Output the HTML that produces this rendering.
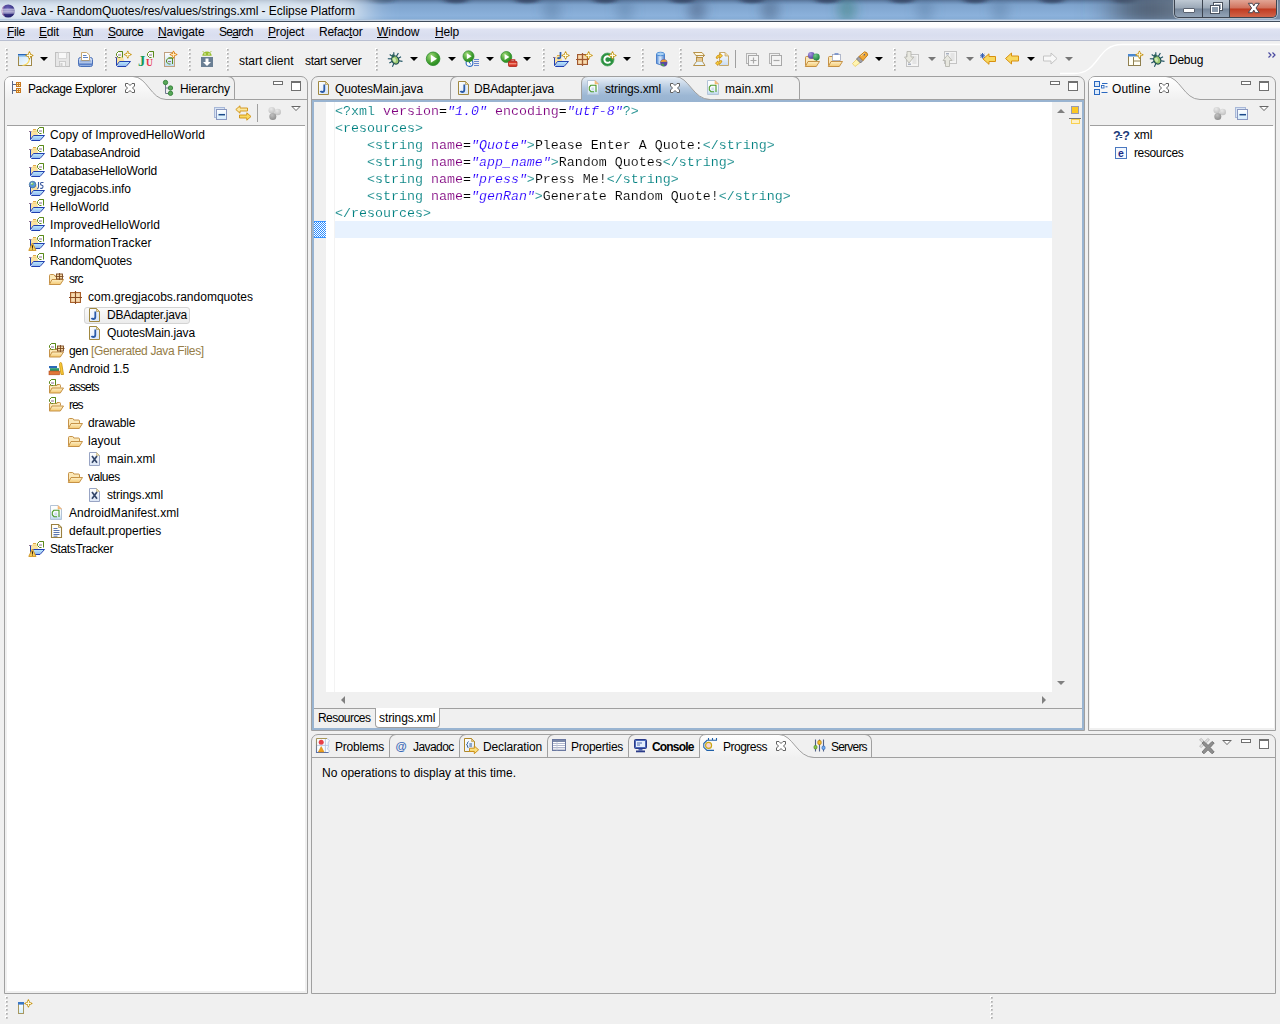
<!DOCTYPE html>
<html><head><meta charset="utf-8"><title>Java - RandomQuotes/res/values/strings.xml - Eclipse Platform</title>
<style>
*{margin:0;padding:0}
html,body{width:1280px;height:1024px;overflow:hidden;background:#f0f0f0;font-family:"Liberation Sans",sans-serif;font-size:12px;color:#000}
body{position:relative}
.t{position:absolute;white-space:pre;line-height:16px;height:16px;font-size:12px}
.ic{position:absolute;overflow:visible}
#title{position:absolute;left:0;top:0;width:1280px;height:22px;overflow:hidden;background:#86a8d0}
#winbtns{position:absolute;left:1174px;top:0;width:103px;height:18px;border:1px solid #3c4450;border-top:none;border-radius:0 0 5px 5px;box-sizing:border-box;overflow:hidden;display:flex;box-shadow:0 0 0 1px rgba(255,255,255,.45)}
.wb{position:relative;height:17px;box-sizing:border-box}
.wb.min{width:28px;background:linear-gradient(#bfc9d4 0,#9aa7b6 48%,#76869a 52%,#93a4b7 100%);border-right:1px solid #3c4450}
.wb.min i{position:absolute;left:8px;top:8px;width:10px;height:3px;background:#fff;border:1px solid #5a6270;box-sizing:content-box;border-radius:1px}
.wb.max{width:27px;background:linear-gradient(#bfc9d4 0,#9aa7b6 48%,#76869a 52%,#93a4b7 100%);border-right:1px solid #3c4450}
.wb.max i{position:absolute;left:11px;top:3px;width:6px;height:5px;border:1.5px solid #fff;outline:1px solid #4a525e}
.wb.max b{position:absolute;left:8px;top:6px;width:6px;height:5px;border:1.5px solid #fff;outline:1px solid #4a525e;background:#8b9aab}
.wb.cls{width:46px;background:linear-gradient(#e2a595 0,#d0715c 48%,#c03a20 52%,#d0644a 100%)}
.wb.cls svg{position:absolute;left:17px;top:2px}
#menu{position:absolute;left:0;top:22px;width:1280px;height:19px;
 background:linear-gradient(#ffffff 0,#fcfcfe 5px,#f2f4fb 6px,#dfe3f3 7px,#d9deef 13px,#dce0f0 17px,#e0e4f2 18px,#b9bfd1 18px,#b9bfd1 19px)}
#menu u{text-decoration:underline;text-underline-offset:1px}
#toolbar{position:absolute;left:0;top:0;width:0;height:0}
.hdl{position:absolute;width:3px;background-image:linear-gradient(#fff,#fff),linear-gradient(#a0a0a0,#a0a0a0);
 background-size:2px 2px,2px 2px;background-position:1px 1px,0 0;background-repeat:repeat-y;
 background-size:2px 4px,2px 4px;
}
.hdl{background:
 repeating-linear-gradient(to bottom,#a8a8a8 0,#a8a8a8 2px,transparent 2px,transparent 4px) 0 0/2px 100% no-repeat,
 repeating-linear-gradient(to bottom,transparent 0,transparent 1px,#fff 1px,#fff 3px,transparent 3px,transparent 4px) 1px 0/2px 100% no-repeat}
.dd{position:absolute;width:0;height:0;border-left:4px solid transparent;border-right:4px solid transparent;border-top:4px solid #000}
.vsep{position:absolute;width:1px;background:#a0a0a0}
.panel{position:absolute;box-sizing:border-box;border:1px solid #a0a0a0;border-radius:7px 7px 0 0;background:#f0f0f0;
 background-image:linear-gradient(#f0f0f0 0,#f0f0f0 22px,#a0a0a0 22px,#a0a0a0 23px,#f0f0f0 23px);background-repeat:no-repeat}
.panel{border-bottom-color:#a0a0a0}
.tabcurve{position:absolute}
.tabend{position:absolute;width:7px;height:23px;border:1px solid #a0a0a0;border-left:none;border-bottom:none;border-radius:0 7px 0 0;box-sizing:border-box;margin-left:-6px}
.mini{position:absolute;width:10px;height:4px;border:1px solid #707070;box-sizing:border-box;background:#fff}
.maxi{position:absolute;width:10px;height:10px;border:1px solid #707070;border-top-width:2px;box-sizing:border-box;background:#fff}
.vmenu{position:absolute;width:0;height:0;border-left:5px solid transparent;border-right:5px solid transparent;border-top:5px solid #666}
.vmenu:after{content:"";position:absolute;left:-3px;top:-4px;border-left:3px solid transparent;border-right:3px solid transparent;border-top:3px solid #fff}
.white{position:absolute;background:#fff}
.hline{position:absolute;height:1px;background:#a0a0a0}
.selbox{position:absolute;border:1px solid #d4d4d4;border-radius:3px;box-sizing:border-box;background:linear-gradient(#fafafa,#ececec)}
.bluebox{position:absolute;box-sizing:border-box;border:2px solid #99b4d1;background:#f0f0f0}
#code{position:absolute;left:335px;top:104px;-webkit-text-stroke:0.12px #fff;font-family:"Liberation Mono",monospace;font-size:12.2px;line-height:17px;color:#000;white-space:pre;transform:scaleX(1.09272);transform-origin:0 0}
#code .tg{color:#008080}
#code .at{color:#7f007f}
#code .va{color:#2a00ff;font-style:italic}
.arr{position:absolute;width:0;height:0;border:4px solid transparent}
.arr.up{border-bottom:4px solid #808080;border-top:none}
.arr.down{border-top:4px solid #808080;border-bottom:none}
.arr.left{border-right:4px solid #808080;border-left:none}
.arr.right{border-left:4px solid #808080;border-right:none}
.tabsep{position:absolute;width:8px;height:23px;border:1px solid #a0a0a0;border-right:none;border-bottom:none;border-radius:7px 0 0 0;box-sizing:border-box}
.tabend{position:absolute;width:7px;height:23px;border:1px solid #a0a0a0;border-left:none;border-bottom:none;border-radius:0 7px 0 0;box-sizing:border-box;margin-left:0}

</style></head><body>
<svg width="0" height="0" style="position:absolute"><defs>
<linearGradient id="gInact" x1="0" y1="0" x2="0" y2="1"><stop offset="0" stop-color="#ffffff"/><stop offset="1" stop-color="#f0f0f0"/></linearGradient>
</defs></svg>
<div id="title"><svg style="position:absolute;left:0;top:0" width="1280" height="22" viewBox="0 0 1280 22"><defs><linearGradient id="tbg" x1="0" y1="0" x2="0" y2="1"><stop offset="0" stop-color="#587498"/><stop offset=".1" stop-color="#6b8db6"/><stop offset=".22" stop-color="#7ea3cd"/><stop offset=".7" stop-color="#8bb1db"/><stop offset="1" stop-color="#80a7d1"/></linearGradient><filter id="b4" x="-50%" y="-200%" width="200%" height="500%"><feGaussianBlur stdDeviation="3.500 1.300"/></filter><filter id="b6" x="-50%" y="-200%" width="200%" height="500%"><feGaussianBlur stdDeviation="6 4"/></filter><filter id="b14" x="-20%" y="-300%" width="140%" height="700%"><feGaussianBlur stdDeviation="16 5"/></filter><filter id="b20" x="-50%" y="-300%" width="200%" height="700%"><feGaussianBlur stdDeviation="16 6"/></filter></defs><rect width="1280" height="22" fill="url(#tbg)"/><g filter="url(#b6)"><ellipse cx="697" cy="10" rx="9" ry="12" fill="#3f5878" opacity="0.5"/><ellipse cx="770" cy="10" rx="9" ry="12" fill="#3f5878" opacity="0.45"/><ellipse cx="847" cy="10" rx="9" ry="12" fill="#2f7a6a" opacity="0.45"/><ellipse cx="552" cy="10" rx="9" ry="12" fill="#4a6a90" opacity="0.35"/><ellipse cx="625" cy="10" rx="9" ry="12" fill="#4a6a90" opacity="0.3"/><ellipse cx="925" cy="10" rx="9" ry="12" fill="#4a6a90" opacity="0.3"/><ellipse cx="1000" cy="10" rx="9" ry="12" fill="#4a6a90" opacity="0.3"/></g><g filter="url(#b4)"><ellipse cx="232" cy="0" rx="12" ry="3.600" fill="#22324e" opacity="0.35"/><ellipse cx="307" cy="0" rx="12" ry="3.600" fill="#22324e" opacity="0.35"/><ellipse cx="382" cy="0" rx="12" ry="3.600" fill="#22324e" opacity="0.35"/><ellipse cx="456" cy="0" rx="12" ry="3.600" fill="#22324e" opacity="0.62"/><ellipse cx="527" cy="0" rx="12" ry="3.600" fill="#22324e" opacity="0.62"/><ellipse cx="605" cy="0" rx="12" ry="3.600" fill="#22324e" opacity="0.62"/><ellipse cx="682" cy="0" rx="12" ry="3.600" fill="#22324e" opacity="0.62"/><ellipse cx="752" cy="0" rx="12" ry="3.600" fill="#22324e" opacity="0.62"/><ellipse cx="827" cy="0" rx="12" ry="3.600" fill="#22324e" opacity="0.62"/><ellipse cx="902" cy="0" rx="12" ry="3.600" fill="#22324e" opacity="0.62"/><ellipse cx="975" cy="0" rx="12" ry="3.600" fill="#22324e" opacity="0.62"/><ellipse cx="1052" cy="0" rx="12" ry="3.600" fill="#22324e" opacity="0.62"/><ellipse cx="1125" cy="0" rx="12" ry="3.600" fill="#22324e" opacity="0.62"/></g><g filter="url(#b20)"><rect x="1135" y="-6" width="160" height="30" fill="#6c7c90" opacity=".95"/><rect x="1277" y="0" width="3" height="20" fill="#a4b2c2"/><rect x="1112" y="-4" width="58" height="26" fill="#4a5a6e" opacity=".75"/></g><g filter="url(#b14)"><rect x="-40" y="-8" width="405" height="38" fill="#f4f6f8" opacity=".6"/><rect x="-40" y="4" width="400" height="13" fill="#fff" opacity=".52"/></g><rect x="0" y="19" width="1280" height="1" fill="#a9c0da" opacity=".7"/><rect x="0" y="20" width="1280" height="1" fill="#c9d6e6"/><rect x="0" y="21" width="1280" height="1" fill="#3f4b5b"/></svg>
<svg class="ic" style="left:0px;top:3px" width="16" height="16" viewBox="0 0 16 16"><defs><radialGradient id="ecl" cx="0.45" cy="0.3" r="0.75"><stop offset="0" stop-color="#6a62b8"/><stop offset="1" stop-color="#1c1a66"/></radialGradient></defs>
<circle cx="8.200" cy="8" r="6.600" fill="url(#ecl)"/><path d="M1.600 8 a6.600 6.600 0 0 1 3.500 -5.800 a8.500 8.500 0 0 0 0 11.600 A6.600 6.600 0 0 1 1.600 8Z" fill="#e89ac0" opacity=".6"/><rect x="1.800" y="5.700" width="12.900" height="1" fill="#e8e6f8" opacity=".9"/><rect x="1.500" y="7.500" width="13.300" height="1.100" fill="#ffffff" opacity=".95"/><rect x="1.800" y="9.400" width="12.900" height="1" fill="#e8e6f8" opacity=".9"/></svg>
<span class="t" style="left:21px;top:3px;letter-spacing:-0.035px;">Java - RandomQuotes/res/values/strings.xml - Eclipse Platform</span>
<div id="winbtns"><div class="wb min"><i></i></div><div class="wb max"><i></i><b></b></div><div class="wb cls"><svg width="14" height="12" viewBox="0 0 14 12"><path transform="translate(1.300 1.300)" d="M0 0 H4 L5.500 2.600 L7 0 H11 L7.700 4.700 L11 9.400 H7 L5.500 6.800 L4 9.400 H0 L3.300 4.700 Z" fill="#ffffff" stroke="#4a4650" stroke-width="1" stroke-linejoin="round"/></svg></div></div>
</div>
<div id="menu">
<span class="t" style="left:7px;top:2px;letter-spacing:-0.388px;"><u>F</u>ile</span>
<span class="t" style="left:39px;top:2px;letter-spacing:-0.201px;"><u>E</u>dit</span>
<span class="t" style="left:73px;top:2px;letter-spacing:-0.812px;"><u>R</u>un</span>
<span class="t" style="left:108px;top:2px;letter-spacing:-0.463px;"><u>S</u>ource</span>
<span class="t" style="left:158px;top:2px;letter-spacing:-0.083px;"><u>N</u>avigate</span>
<span class="t" style="left:219px;top:2px;letter-spacing:-0.736px;">Se<u>a</u>rch</span>
<span class="t" style="left:268px;top:2px;letter-spacing:-0.171px;"><u>P</u>roject</span>
<span class="t" style="left:319px;top:2px;letter-spacing:-0.250px;">Refac<u>t</u>or</span>
<span class="t" style="left:377px;top:2px;letter-spacing:-0.034px;"><u>W</u>indow</span>
<span class="t" style="left:435px;top:2px;letter-spacing:-0.196px;"><u>H</u>elp</span>
</div>
<div id="toolbar">
<svg style="position:absolute;left:5px;top:48px" width="3" height="24" viewBox="0 0 3 24"><rect x="0" y="0" width="2" height="2" fill="#fff"/><rect x="1" y="1" width="1.700" height="1.700" fill="#b0b0b0"/><rect x="0" y="4" width="2" height="2" fill="#fff"/><rect x="1" y="5" width="1.700" height="1.700" fill="#b0b0b0"/><rect x="0" y="8" width="2" height="2" fill="#fff"/><rect x="1" y="9" width="1.700" height="1.700" fill="#b0b0b0"/><rect x="0" y="12" width="2" height="2" fill="#fff"/><rect x="1" y="13" width="1.700" height="1.700" fill="#b0b0b0"/><rect x="0" y="16" width="2" height="2" fill="#fff"/><rect x="1" y="17" width="1.700" height="1.700" fill="#b0b0b0"/><rect x="0" y="20" width="2" height="2" fill="#fff"/><rect x="1" y="21" width="1.700" height="1.700" fill="#b0b0b0"/></svg>
<svg class="ic" style="left:18px;top:51px" width="16" height="16" viewBox="0 0 16 16"><defs><linearGradient id="nwg" x1="0" y1="0" x2="1" y2="1"><stop offset="0" stop-color="#c8e4f8"/><stop offset="1" stop-color="#ffffff"/></linearGradient></defs>
<rect x="0.500" y="3.500" width="13" height="11" fill="url(#nwg)" stroke="#a08848"/><rect x="0" y="3" width="11" height="1.300" fill="#2a68b8"/><rect x="0" y="4.300" width="11" height="1.200" fill="#6aa8e8"/>
<path d="M11.400 8 Q11 13.500 4.500 14.500" fill="none" stroke="#f8d860" stroke-width="1.200"/><path d="M11.4 0.8000000000000003 L12.48 3.3200000000000003 L15.0 4.4 L12.48 5.48 L11.4 8.0 L10.32 5.48 L7.800000000000001 4.4 L10.32 3.3200000000000003 Z" fill="#c8981c" stroke="#c8981c" stroke-width="1.100" stroke-linejoin="round"/><path d="M11.4 1.9000000000000004 V6.9 M8.9 4.4 H13.9" stroke="#fffbe0" stroke-width="1.100"/></svg>
<div class="dd" style="left:40px;top:57px;border-top-color:#000"></div>
<svg class="ic" style="left:54px;top:51px" width="16" height="16" viewBox="0 0 16 16"><rect x="1.500" y="1.500" width="14" height="14" fill="#e6e6e6" stroke="#c0c0c0"/><rect x="4.500" y="1.500" width="8" height="6" fill="#f8f8f8" stroke="#cfcfcf" stroke-width=".8"/><rect x="5.500" y="10.500" width="6" height="5" fill="#f4f4f4" stroke="#c4c4c4" stroke-width=".8"/><rect x="6.500" y="12" width="2" height="3" fill="#d0d0d0"/></svg>
<svg class="ic" style="left:78px;top:51px" width="16" height="16" viewBox="0 0 16 16"><defs><linearGradient id="prg" x1="0" y1="0" x2="0" y2="1"><stop offset="0" stop-color="#dce6f6"/><stop offset="1" stop-color="#8aa8dc"/></linearGradient></defs>
<rect x="0.500" y="6.500" width="14" height="9" rx="2" fill="url(#prg)" stroke="#4a70b8"/><rect x="1" y="12.500" width="13" height="1.500" fill="#5a80c8"/>
<path d="M3.500 9.500 V1.500 H8.500 L11.500 4 V9.500 Z" fill="#fff" stroke="#c8a870"/><path d="M5 4.500h3.500M5 6.500h5" stroke="#4a70b8" stroke-width=".9"/><rect x="2" y="9.500" width="11" height="1" fill="#4a70b8" opacity=".5"/></svg>
<svg style="position:absolute;left:104px;top:48px" width="3" height="24" viewBox="0 0 3 24"><rect x="0" y="0" width="2" height="2" fill="#fff"/><rect x="1" y="1" width="1.700" height="1.700" fill="#b0b0b0"/><rect x="0" y="4" width="2" height="2" fill="#fff"/><rect x="1" y="5" width="1.700" height="1.700" fill="#b0b0b0"/><rect x="0" y="8" width="2" height="2" fill="#fff"/><rect x="1" y="9" width="1.700" height="1.700" fill="#b0b0b0"/><rect x="0" y="12" width="2" height="2" fill="#fff"/><rect x="1" y="13" width="1.700" height="1.700" fill="#b0b0b0"/><rect x="0" y="16" width="2" height="2" fill="#fff"/><rect x="1" y="17" width="1.700" height="1.700" fill="#b0b0b0"/><rect x="0" y="20" width="2" height="2" fill="#fff"/><rect x="1" y="21" width="1.700" height="1.700" fill="#b0b0b0"/></svg>
<svg class="ic" style="left:115px;top:51px" width="16" height="16" viewBox="0 0 16 16"><g transform="translate(0 2)"><defs><linearGradient id="flp" x1="0" y1="0" x2="0" y2="1"><stop offset="0" stop-color="#b8e6fc"/><stop offset="1" stop-color="#94baf0"/></linearGradient></defs><path d="M2 5.200 L4 2.800 L7.500 2.800 L9.500 8.500 L4 8.500 L2 12.500Z" fill="#fbe2a0"/><path d="M4 2.500h3" stroke="#e0a848"/><path d="M4 4.500h3" stroke="#f8d880"/><path d="M0 4.500h2.500" stroke="#8a7090"/>
<path d="M4.800 9 H14.600 L10.800 13 H2.200Z" fill="url(#flp)"/><path d="M1.500 5 V12.500 L2.500 13.500 H11 L15.500 8.500 H4.500 L1.700 12.300" fill="none" stroke="#2040b0" stroke-width="1" stroke-linejoin="round"/></g><path d="M3.5 0.5 H7.5 V6.5 M7.5 0.5 H3.5 L1.5 2.5 V4.5 L3.5 6.5 H5.5" fill="#fff" stroke="#5a8a1a" stroke-width="1" stroke-linejoin="round"/><path d="M3 4h3" stroke="#8a7090" stroke-width="1"/><path d="M12.8 0.20000000000000018 L13.82 2.58 L16.2 3.6 L13.82 4.62 L12.8 7.0 L11.780000000000001 4.62 L9.4 3.6 L11.780000000000001 2.58 Z" fill="#c8981c" stroke="#c8981c" stroke-width="1.100" stroke-linejoin="round"/><path d="M12.8 1.3000000000000003 V5.9 M10.5 3.6 H15.1" stroke="#fffbe0" stroke-width="1.100"/></svg>
<svg class="ic" style="left:138px;top:51px" width="16" height="16" viewBox="0 0 16 16"><text x="0" y="15.400" font-family="Liberation Serif" font-weight="bold" font-size="14.500" fill="#1a9a5a">J</text><text x="8" y="15.400" font-family="Liberation Serif" font-weight="bold" font-size="9.500" fill="#e83048">U</text><path d="M11.5 0.5 H15.5 V6.5 M15.5 0.5 H11.5 L9.5 2.5 V4.5 L11.5 6.5 H13.5" fill="#fff" stroke="#5a8a1a" stroke-width="1" stroke-linejoin="round"/><path d="M11 4h3" stroke="#8a7090" stroke-width="1"/></svg>
<svg class="ic" style="left:162px;top:51px" width="16" height="16" viewBox="0 0 16 16"><defs><linearGradient id="naf" x1="0" y1="0" x2="0" y2="1"><stop offset="0" stop-color="#ffffff"/><stop offset="1" stop-color="#bcdcf0"/></linearGradient></defs><rect x="2.500" y="1.500" width="10" height="14" fill="url(#naf)" stroke="#c0a080"/><path d="M6.5 7.0 H10.5 V13.0 M10.5 7.0 H6.5 L4.5 9.0 V11.0 L6.5 13.0 H8.5" fill="none" stroke="#5a8a1a" stroke-width="1" stroke-linejoin="round"/><path d="M6 10.5h3" stroke="#8a7090" stroke-width="1"/><path d="M11.5 0.20000000000000018 L12.52 2.58 L14.9 3.6 L12.52 4.62 L11.5 7.0 L10.48 4.62 L8.1 3.6 L10.48 2.58 Z" fill="#e08818" stroke="#e08818" stroke-width="1.100" stroke-linejoin="round"/><path d="M11.5 1.3000000000000003 V5.9 M9.2 3.6 H13.8" stroke="#ffe8c0" stroke-width="1.100"/></svg>
<svg style="position:absolute;left:188px;top:48px" width="3" height="24" viewBox="0 0 3 24"><rect x="0" y="0" width="2" height="2" fill="#fff"/><rect x="1" y="1" width="1.700" height="1.700" fill="#b0b0b0"/><rect x="0" y="4" width="2" height="2" fill="#fff"/><rect x="1" y="5" width="1.700" height="1.700" fill="#b0b0b0"/><rect x="0" y="8" width="2" height="2" fill="#fff"/><rect x="1" y="9" width="1.700" height="1.700" fill="#b0b0b0"/><rect x="0" y="12" width="2" height="2" fill="#fff"/><rect x="1" y="13" width="1.700" height="1.700" fill="#b0b0b0"/><rect x="0" y="16" width="2" height="2" fill="#fff"/><rect x="1" y="17" width="1.700" height="1.700" fill="#b0b0b0"/><rect x="0" y="20" width="2" height="2" fill="#fff"/><rect x="1" y="21" width="1.700" height="1.700" fill="#b0b0b0"/></svg>
<svg class="ic" style="left:199px;top:51px" width="16" height="16" viewBox="0 0 16 16"><path d="M3.300 4.800 a4.700 4.300 0 0 1 9.400 0z" fill="#9ac030"/><path d="M4.800 1.500 l-1-1.300M11.200 1.500 l1-1.300" stroke="#9ac030" stroke-width=".9"/><circle cx="6" cy="3" r=".7" fill="#fff"/><circle cx="10" cy="3" r=".7" fill="#fff"/><rect x="2" y="6" width="12" height="10" fill="#6a7f94"/><path d="M6.500 7.500 h3 v3.500 h2.500 L8 15 4 11 h2.500z" fill="#fff"/></svg>
<svg style="position:absolute;left:226px;top:48px" width="3" height="24" viewBox="0 0 3 24"><rect x="0" y="0" width="2" height="2" fill="#fff"/><rect x="1" y="1" width="1.700" height="1.700" fill="#b0b0b0"/><rect x="0" y="4" width="2" height="2" fill="#fff"/><rect x="1" y="5" width="1.700" height="1.700" fill="#b0b0b0"/><rect x="0" y="8" width="2" height="2" fill="#fff"/><rect x="1" y="9" width="1.700" height="1.700" fill="#b0b0b0"/><rect x="0" y="12" width="2" height="2" fill="#fff"/><rect x="1" y="13" width="1.700" height="1.700" fill="#b0b0b0"/><rect x="0" y="16" width="2" height="2" fill="#fff"/><rect x="1" y="17" width="1.700" height="1.700" fill="#b0b0b0"/><rect x="0" y="20" width="2" height="2" fill="#fff"/><rect x="1" y="21" width="1.700" height="1.700" fill="#b0b0b0"/></svg>
<span class="t" style="left:239px;top:53px;letter-spacing:-0.016px;">start client</span>
<span class="t" style="left:305px;top:53px;letter-spacing:-0.297px;">start server</span>
<svg style="position:absolute;left:375px;top:48px" width="3" height="24" viewBox="0 0 3 24"><rect x="0" y="0" width="2" height="2" fill="#fff"/><rect x="1" y="1" width="1.700" height="1.700" fill="#b0b0b0"/><rect x="0" y="4" width="2" height="2" fill="#fff"/><rect x="1" y="5" width="1.700" height="1.700" fill="#b0b0b0"/><rect x="0" y="8" width="2" height="2" fill="#fff"/><rect x="1" y="9" width="1.700" height="1.700" fill="#b0b0b0"/><rect x="0" y="12" width="2" height="2" fill="#fff"/><rect x="1" y="13" width="1.700" height="1.700" fill="#b0b0b0"/><rect x="0" y="16" width="2" height="2" fill="#fff"/><rect x="1" y="17" width="1.700" height="1.700" fill="#b0b0b0"/><rect x="0" y="20" width="2" height="2" fill="#fff"/><rect x="1" y="21" width="1.700" height="1.700" fill="#b0b0b0"/></svg>
<svg class="ic" style="left:387px;top:51px" width="16" height="16" viewBox="0 0 16 16"><g transform="translate(0.700 0.800) scale(.92) rotate(-28 8 8.500)"><path d="M5 6 L1.500 4 M4.600 8.800 L0.800 8.800 M5 11.500 L1.800 14 M11 6 L14.500 4 M11.400 8.800 L15.200 8.800 M11 11.500 L14.200 14 M6.800 3.500 L5.500 0.800 M9.200 3.500 L10.500 0.800" stroke="#1a5060" stroke-width="1.200" fill="none"/><ellipse cx="8" cy="9" rx="3.700" ry="4.700" fill="#9cc870" stroke="#1a4a50" stroke-width="1.200"/><ellipse cx="7.300" cy="8.300" rx="1.600" ry="2.500" fill="#cce8b0"/><circle cx="8" cy="3.800" r="1.700" fill="#2a6058"/></g></svg>
<div class="dd" style="left:410px;top:57px;border-top-color:#000"></div>
<svg class="ic" style="left:425px;top:51px" width="16" height="16" viewBox="0 0 16 16"><defs><radialGradient id="rg" cx=".35" cy=".3" r=".9"><stop offset="0" stop-color="#a0d878"/><stop offset=".6" stop-color="#3a9a2a"/><stop offset="1" stop-color="#1a7a1a"/></radialGradient></defs><circle cx="8.100" cy="7.800" r="6.800" fill="url(#rg)" stroke="#2a8a2a" stroke-width=".8"/><path d="M5.800 3.800 L12 7.800 L5.800 11.800 Z" fill="#fff"/></svg>
<div class="dd" style="left:448px;top:57px;border-top-color:#000"></div>
<svg class="ic" style="left:463px;top:51px" width="16" height="16" viewBox="0 0 16 16"><defs><radialGradient id="rg" cx=".35" cy=".3" r=".9"><stop offset="0" stop-color="#a0d878"/><stop offset=".6" stop-color="#3a9a2a"/><stop offset="1" stop-color="#1a7a1a"/></radialGradient></defs><circle cx="6.500" cy="12" r="3.400" fill="#fff" stroke="#2a68c0" stroke-width="1.100"/><path d="M6.500 10 V12 L8 13.300" fill="none" stroke="#2a68c0" stroke-width="1"/><path d="M11 8.500h5M11 10.500h5M11 12.500h5M11 14.500h5" stroke="#6a88d0" stroke-width="1"/><circle cx="5.500" cy="5.300" r="5.500" fill="url(#rg)" stroke="#2a8a2a" stroke-width=".7"/><path d="M3.800 2.300 L8.600 5.300 L3.800 8.300 Z" fill="#fff"/></svg>
<div class="dd" style="left:486px;top:57px;border-top-color:#000"></div>
<svg class="ic" style="left:501px;top:51px" width="16" height="16" viewBox="0 0 16 16"><defs><radialGradient id="rg" cx=".35" cy=".3" r=".9"><stop offset="0" stop-color="#a0d878"/><stop offset=".6" stop-color="#3a9a2a"/><stop offset="1" stop-color="#1a7a1a"/></radialGradient></defs><circle cx="5.300" cy="6" r="5.500" fill="url(#rg)" stroke="#2a8a2a" stroke-width=".7"/><path d="M3.600 3 L8.400 6 L3.600 9 Z" fill="#fff"/><rect x="7.500" y="10.300" width="8.500" height="5.200" rx="1" fill="#d83828" stroke="#a82018" stroke-width=".8"/><path d="M9.800 10.300 V8.800 H13.700 V10.300" fill="none" stroke="#c02820" stroke-width="1.200"/><rect x="8" y="12.300" width="7.500" height="1" fill="#f8b0a0"/></svg>
<div class="dd" style="left:523px;top:57px;border-top-color:#000"></div>
<svg style="position:absolute;left:542px;top:48px" width="3" height="24" viewBox="0 0 3 24"><rect x="0" y="0" width="2" height="2" fill="#fff"/><rect x="1" y="1" width="1.700" height="1.700" fill="#b0b0b0"/><rect x="0" y="4" width="2" height="2" fill="#fff"/><rect x="1" y="5" width="1.700" height="1.700" fill="#b0b0b0"/><rect x="0" y="8" width="2" height="2" fill="#fff"/><rect x="1" y="9" width="1.700" height="1.700" fill="#b0b0b0"/><rect x="0" y="12" width="2" height="2" fill="#fff"/><rect x="1" y="13" width="1.700" height="1.700" fill="#b0b0b0"/><rect x="0" y="16" width="2" height="2" fill="#fff"/><rect x="1" y="17" width="1.700" height="1.700" fill="#b0b0b0"/><rect x="0" y="20" width="2" height="2" fill="#fff"/><rect x="1" y="21" width="1.700" height="1.700" fill="#b0b0b0"/></svg>
<svg class="ic" style="left:553px;top:51px" width="16" height="16" viewBox="0 0 16 16"><g transform="translate(0 2)"><defs><linearGradient id="flp" x1="0" y1="0" x2="0" y2="1"><stop offset="0" stop-color="#b8e6fc"/><stop offset="1" stop-color="#94baf0"/></linearGradient></defs><path d="M2 5.200 L4 2.800 L7.500 2.800 L9.500 8.500 L4 8.500 L2 12.500Z" fill="#fbe2a0"/><path d="M4 2.500h3" stroke="#e0a848"/><path d="M4 4.500h3" stroke="#f8d880"/><path d="M0 4.500h2.500" stroke="#8a7090"/>
<path d="M4.800 9 H14.600 L10.800 13 H2.200Z" fill="url(#flp)"/><path d="M1.500 5 V12.500 L2.500 13.500 H11 L15.500 8.500 H4.500 L1.700 12.300" fill="none" stroke="#2040b0" stroke-width="1" stroke-linejoin="round"/></g><path d="M7.500 1 V5.800 Q7.500 7.300 6 7.300 Q5 7.300 4.600 6.500" fill="none" stroke="#2a5ab0" stroke-width="1.700"/><path d="M12.6 0.8000000000000003 L13.68 3.3200000000000003 L16.2 4.4 L13.68 5.48 L12.6 8.0 L11.52 5.48 L9.0 4.4 L11.52 3.3200000000000003 Z" fill="#c8981c" stroke="#c8981c" stroke-width="1.100" stroke-linejoin="round"/><path d="M12.6 1.9000000000000004 V6.9 M10.1 4.4 H15.1" stroke="#fffbe0" stroke-width="1.100"/></svg>
<svg class="ic" style="left:576px;top:51px" width="16" height="16" viewBox="0 0 16 16"><rect x="1.500" y="3.500" width="10" height="10" fill="#e4b888" stroke="#a05830"/><path d="M6.500 2 v13 M0 8.500 h13" stroke="#a05830" stroke-width="1.200"/><rect x="2.500" y="4.500" width="3" height="3" fill="#f8dcb0"/><rect x="7.500" y="4.500" width="3" height="3" fill="#f8dcb0"/><rect x="2.500" y="9.500" width="3" height="3" fill="#f8dcb0"/><rect x="7.500" y="9.500" width="3" height="3" fill="#f8dcb0"/><path d="M12.7 0.8000000000000003 L13.78 3.3200000000000003 L16.3 4.4 L13.78 5.48 L12.7 8.0 L11.62 5.48 L9.1 4.4 L11.62 3.3200000000000003 Z" fill="#c8981c" stroke="#c8981c" stroke-width="1.100" stroke-linejoin="round"/><path d="M12.7 1.9000000000000004 V6.9 M10.2 4.4 H15.200000000000001" stroke="#fffbe0" stroke-width="1.100"/></svg>
<svg class="ic" style="left:600px;top:51px" width="16" height="16" viewBox="0 0 16 16"><circle cx="7.500" cy="8.500" r="6.500" fill="#2a9040" stroke="#50a860" stroke-width=".8"/><path d="M10.300 6.500 a3.300 3.300 0 1 0 0 4" fill="none" stroke="#fff" stroke-width="2"/><path d="M12.5 0.8000000000000003 L13.58 3.3200000000000003 L16.1 4.4 L13.58 5.48 L12.5 8.0 L11.42 5.48 L8.9 4.4 L11.42 3.3200000000000003 Z" fill="#c8981c" stroke="#c8981c" stroke-width="1.100" stroke-linejoin="round"/><path d="M12.5 1.9000000000000004 V6.9 M10.0 4.4 H15.000000000000002" stroke="#fffbe0" stroke-width="1.100"/></svg>
<div class="dd" style="left:623px;top:57px;border-top-color:#000"></div>
<svg style="position:absolute;left:641px;top:48px" width="3" height="24" viewBox="0 0 3 24"><rect x="0" y="0" width="2" height="2" fill="#fff"/><rect x="1" y="1" width="1.700" height="1.700" fill="#b0b0b0"/><rect x="0" y="4" width="2" height="2" fill="#fff"/><rect x="1" y="5" width="1.700" height="1.700" fill="#b0b0b0"/><rect x="0" y="8" width="2" height="2" fill="#fff"/><rect x="1" y="9" width="1.700" height="1.700" fill="#b0b0b0"/><rect x="0" y="12" width="2" height="2" fill="#fff"/><rect x="1" y="13" width="1.700" height="1.700" fill="#b0b0b0"/><rect x="0" y="16" width="2" height="2" fill="#fff"/><rect x="1" y="17" width="1.700" height="1.700" fill="#b0b0b0"/><rect x="0" y="20" width="2" height="2" fill="#fff"/><rect x="1" y="21" width="1.700" height="1.700" fill="#b0b0b0"/></svg>
<svg class="ic" style="left:654px;top:51px" width="16" height="16" viewBox="0 0 16 16"><defs><linearGradient id="cyl" x1="0" y1="0" x2="1" y2="0"><stop offset="0" stop-color="#4a88d8"/><stop offset=".45" stop-color="#e0ecfa"/><stop offset="1" stop-color="#4a80d0"/></linearGradient></defs><path d="M2.500 3 V12.500 Q6.500 15 10.500 12.500 V3" fill="url(#cyl)" stroke="#3a70c0" stroke-width=".8"/><ellipse cx="6.500" cy="3" rx="4" ry="1.800" fill="#a8d0f4" stroke="#3a80d0" stroke-width=".8"/><circle cx="9.800" cy="11.800" r="3.600" fill="#5a48a0"/><path d="M6.400 11 a3.600 3.600 0 0 1 6.800 -.2 z" fill="#e8a030"/><path d="M7 13.500 q2.500 -2.500 3.500 1.800 a3.600 3.600 0 0 1 -3.500 -1.800z" fill="#48a848"/></svg>
<svg style="position:absolute;left:679px;top:48px" width="3" height="24" viewBox="0 0 3 24"><rect x="0" y="0" width="2" height="2" fill="#fff"/><rect x="1" y="1" width="1.700" height="1.700" fill="#b0b0b0"/><rect x="0" y="4" width="2" height="2" fill="#fff"/><rect x="1" y="5" width="1.700" height="1.700" fill="#b0b0b0"/><rect x="0" y="8" width="2" height="2" fill="#fff"/><rect x="1" y="9" width="1.700" height="1.700" fill="#b0b0b0"/><rect x="0" y="12" width="2" height="2" fill="#fff"/><rect x="1" y="13" width="1.700" height="1.700" fill="#b0b0b0"/><rect x="0" y="16" width="2" height="2" fill="#fff"/><rect x="1" y="17" width="1.700" height="1.700" fill="#b0b0b0"/><rect x="0" y="20" width="2" height="2" fill="#fff"/><rect x="1" y="21" width="1.700" height="1.700" fill="#b0b0b0"/></svg>
<svg class="ic" style="left:691px;top:51px" width="16" height="16" viewBox="0 0 16 16"><path d="M2.500 1.500 H11 L13.500 4.500 H5 Z" fill="#fff8e0" stroke="#b08838" stroke-width=".9"/><path d="M5 4.500 L7 6.500 M13.500 4.500 L11.500 6.500" stroke="#b08838" stroke-width=".9"/><rect x="5.500" y="6.500" width="6" height="4" fill="#e8c890" stroke="#b08838" stroke-width=".9"/><path d="M5.500 10.500 L2.500 14.500 H14 L11.500 10.500" fill="#e8f4fc" stroke="#b08838" stroke-width=".9"/></svg>
<svg class="ic" style="left:713px;top:51px" width="16" height="16" viewBox="0 0 16 16"><defs><linearGradient id="tbb" x1="0" y1="0" x2="0" y2="1"><stop offset="0" stop-color="#ffffff"/><stop offset="1" stop-color="#c8dcf4"/></linearGradient></defs><path d="M6.500 1.500 H12 L15.500 5 V14.500 H6.500 Z" fill="url(#tbb)" stroke="#c0a060" stroke-width=".9"/><path d="M12 1.500 V5 H15.500" fill="#f0d8a0" stroke="#c0a060" stroke-width=".7"/>
<path d="M3 7 q.5 -3 4 -3.200 v-1.300 l2.500 2.300 l-2.500 2.300 v-1.300 q-2 0 -2.500 1.700z" fill="#f8d040" stroke="#c88a10" stroke-width=".8"/><path d="M9 10 q-.5 3 -4 3.200 v1.300 l-2.500 -2.300 l2.500 -2.300 v1.300 q2 0 2.500 -1.700z" fill="#f8d040" stroke="#c88a10" stroke-width=".8"/></svg>
<div class="vsep" style="left:735px;top:50px;height:18px"></div>
<svg class="ic" style="left:744px;top:51px" width="16" height="16" viewBox="0 0 16 16"><rect x="2.500" y="2.500" width="10" height="10" fill="#f0f0f0" stroke="#b4b4b4"/><rect x="4.500" y="4.500" width="10" height="10" fill="#f4f4f4" stroke="#a8a8a8"/><path d="M6.500 9.500 h6 M9.500 6.500 v6" stroke="#a8a8a8" stroke-width="1.200"/></svg>
<svg class="ic" style="left:767px;top:51px" width="16" height="16" viewBox="0 0 16 16"><rect x="2.500" y="2.500" width="10" height="10" fill="#f0f0f0" stroke="#b4b4b4"/><rect x="4.500" y="4.500" width="10" height="10" fill="#f4f4f4" stroke="#a8a8a8"/><path d="M6.500 9.500 h6" stroke="#a8a8a8" stroke-width="1.200"/></svg>
<svg style="position:absolute;left:794px;top:48px" width="3" height="24" viewBox="0 0 3 24"><rect x="0" y="0" width="2" height="2" fill="#fff"/><rect x="1" y="1" width="1.700" height="1.700" fill="#b0b0b0"/><rect x="0" y="4" width="2" height="2" fill="#fff"/><rect x="1" y="5" width="1.700" height="1.700" fill="#b0b0b0"/><rect x="0" y="8" width="2" height="2" fill="#fff"/><rect x="1" y="9" width="1.700" height="1.700" fill="#b0b0b0"/><rect x="0" y="12" width="2" height="2" fill="#fff"/><rect x="1" y="13" width="1.700" height="1.700" fill="#b0b0b0"/><rect x="0" y="16" width="2" height="2" fill="#fff"/><rect x="1" y="17" width="1.700" height="1.700" fill="#b0b0b0"/><rect x="0" y="20" width="2" height="2" fill="#fff"/><rect x="1" y="21" width="1.700" height="1.700" fill="#b0b0b0"/></svg>
<svg class="ic" style="left:804px;top:51px" width="16" height="16" viewBox="0 0 16 16"><g transform="translate(0 2)"><defs><linearGradient id="yfg" x1="0" y1="0" x2="0" y2="1"><stop offset="0" stop-color="#fdf0c8"/><stop offset="1" stop-color="#f4c870"/></linearGradient></defs><path d="M1.500 12.500 V4.500 Q1.500 3.500 2.500 3.500 H5.500 Q6.500 3.500 6.800 5 H11.500 Q12.500 5 12.500 6 V8" fill="#fbe8b8" stroke="#c08838" stroke-width=".9"/><path d="M1.300 13.500 L4 8.500 H15.500 L12.300 13.500 Z" fill="url(#yfg)" stroke="#c08838" stroke-width=".9" stroke-linejoin="round"/></g><defs><radialGradient id="pb" cx=".35" cy=".3" r=".8"><stop offset="0" stop-color="#a898e0"/><stop offset="1" stop-color="#4a3898"/></radialGradient><radialGradient id="gb" cx=".35" cy=".3" r=".8"><stop offset="0" stop-color="#70c888"/><stop offset="1" stop-color="#187838"/></radialGradient></defs><circle cx="7.300" cy="4.400" r="3.400" fill="url(#pb)"/><circle cx="12.300" cy="6" r="3.400" fill="url(#gb)"/></svg>
<svg class="ic" style="left:827px;top:51px" width="16" height="16" viewBox="0 0 16 16"><g transform="translate(0 2)"><defs><linearGradient id="yfg" x1="0" y1="0" x2="0" y2="1"><stop offset="0" stop-color="#fdf0c8"/><stop offset="1" stop-color="#f4c870"/></linearGradient></defs><path d="M1.500 12.500 V4.500 Q1.500 3.500 2.500 3.500 H5.500 Q6.500 3.500 6.800 5 H11.500 Q12.500 5 12.500 6 V8" fill="#fbe8b8" stroke="#c08838" stroke-width=".9"/><path d="M1.300 13.500 L4 8.500 H15.500 L12.300 13.500 Z" fill="url(#yfg)" stroke="#c08838" stroke-width=".9" stroke-linejoin="round"/></g><rect x="5.500" y="3.500" width="8" height="6" fill="#fff" stroke="#a0a8c0" stroke-width=".8"/><rect x="7.500" y="2.200" width="4" height="1.500" fill="#6a88c8"/></svg>
<svg class="ic" style="left:852px;top:51px" width="16" height="16" viewBox="0 0 16 16"><path d="M0.500 12.500 L5.500 7.500 L9 11 L3 15.500 Z" fill="#fff4b0" stroke="#e8c040" stroke-width=".6"/><path d="M4.500 8 L7 5.500 L11 9.500 L8.500 12 Z" fill="#a0a0a8" stroke="#686870" stroke-width=".8"/><path d="M7 5.500 L12.500 0.800 Q15.500 1 15.800 4 L11 9.500 Z" fill="#f0a838" stroke="#c07810" stroke-width=".9"/><circle cx="12.300" cy="3.800" r=".8" fill="#3a5a98"/><path d="M9 5 L12.500 2" stroke="#fbd890" stroke-width="1"/></svg>
<div class="dd" style="left:875px;top:57px;border-top-color:#000"></div>
<svg style="position:absolute;left:893px;top:48px" width="3" height="24" viewBox="0 0 3 24"><rect x="0" y="0" width="2" height="2" fill="#fff"/><rect x="1" y="1" width="1.700" height="1.700" fill="#b0b0b0"/><rect x="0" y="4" width="2" height="2" fill="#fff"/><rect x="1" y="5" width="1.700" height="1.700" fill="#b0b0b0"/><rect x="0" y="8" width="2" height="2" fill="#fff"/><rect x="1" y="9" width="1.700" height="1.700" fill="#b0b0b0"/><rect x="0" y="12" width="2" height="2" fill="#fff"/><rect x="1" y="13" width="1.700" height="1.700" fill="#b0b0b0"/><rect x="0" y="16" width="2" height="2" fill="#fff"/><rect x="1" y="17" width="1.700" height="1.700" fill="#b0b0b0"/><rect x="0" y="20" width="2" height="2" fill="#fff"/><rect x="1" y="21" width="1.700" height="1.700" fill="#b0b0b0"/></svg>
<svg class="ic" style="left:904px;top:51px" width="16" height="16" viewBox="0 0 16 16"><rect x="2.500" y="3.500" width="12" height="12" fill="#f4f4f4" stroke="#c4c4c4"/><path d="M8.500 6h4M8.500 8h4M8.500 10h4M8.500 12h4" stroke="#d0d0d0" stroke-width=".9"/><rect x="4" y="12.500" width="3" height="1.500" fill="#a8b0c0"/><path d="M3 0.500 H7 V6 H9.800 L5 12 L0.500 6 H3 Z" fill="#e8e8e0" stroke="#b8b8b0" stroke-width=".9"/></svg>
<div class="dd" style="left:928px;top:57px;border-top-color:#777"></div>
<svg class="ic" style="left:942px;top:51px" width="16" height="16" viewBox="0 0 16 16"><rect x="2.500" y="0.500" width="12" height="12" fill="#f4f4f4" stroke="#c4c4c4"/><path d="M8.500 3h4M8.500 5h4M8.500 7h4M8.500 9h4" stroke="#d0d0d0" stroke-width=".9"/><rect x="4" y="2" width="3" height="1.500" fill="#a8b0c0"/><path d="M3.500 15.500 H7.500 V9.500 H10 L5.500 4 L1 9.500 H3.500 Z" fill="#e8e8e0" stroke="#b8b8b0" stroke-width=".9"/></svg>
<div class="dd" style="left:966px;top:57px;border-top-color:#777"></div>
<svg class="ic" style="left:980px;top:51px" width="16" height="16" viewBox="0 0 16 16"><path d="M3 8 L9 2.800 V5.500 H15.500 V10.500 H9 V13.300 Z" fill="#f8d860" stroke="#d89010" stroke-width="1" stroke-linejoin="round"/><path d="M2.500 2v5.500M0 4.800h5M0.700 2.800l3.600 4M4.300 2.800l-3.600 4" stroke="#2a58b0" stroke-width=".9"/></svg>
<svg class="ic" style="left:1004px;top:51px" width="16" height="16" viewBox="0 0 16 16"><path d="M1.500 7.500 L7.500 2 V5 H14.500 V10 H7.500 V13 Z" fill="#f8d860" stroke="#d89010" stroke-width="1" stroke-linejoin="round"/></svg>
<div class="dd" style="left:1027px;top:57px;border-top-color:#000"></div>
<svg class="ic" style="left:1042px;top:51px" width="16" height="16" viewBox="0 0 16 16"><path d="M15 7.500 L9 2 V5 H1.500 V10 H9 V13 Z" fill="#f8f8f8" stroke="#c4c4c4" stroke-width="1" stroke-linejoin="round"/></svg>
<div class="dd" style="left:1065px;top:57px;border-top-color:#777"></div>
<svg style="position:absolute;left:1060px;top:40px" width="220" height="36" viewBox="0 0 220 36"><path d="M0 33.5 L14 33.5 C 40 33.5 36 4.5 62 4.5 L 220 4.5" fill="none" stroke="#fff" stroke-width="1.300"/></svg>
<svg class="ic" style="left:1127px;top:51px" width="16" height="16" viewBox="0 0 16 16"><rect x="1.500" y="3.500" width="12" height="11" fill="#fffef4" stroke="#908050"/><rect x="1" y="3" width="10" height="2.500" fill="#4a88d0"/><path d="M6.500 6 v8.500 M6.500 10 h7" stroke="#908050"/><path d="M12.4 0.19999999999999973 L13.48 2.7199999999999998 L16.0 3.8 L13.48 4.88 L12.4 7.4 L11.32 4.88 L8.8 3.8 L11.32 2.7199999999999998 Z" fill="#c8981c" stroke="#c8981c" stroke-width="1.100" stroke-linejoin="round"/><path d="M12.4 1.2999999999999998 V6.300000000000001 M9.9 3.8 H14.9" stroke="#fffbe0" stroke-width="1.100"/></svg>
<svg class="ic" style="left:1149px;top:51px" width="16" height="16" viewBox="0 0 16 16"><g transform="translate(0.700 0.800) scale(.92) rotate(-28 8 8.500)"><path d="M5 6 L1.500 4 M4.600 8.800 L0.800 8.800 M5 11.500 L1.800 14 M11 6 L14.500 4 M11.400 8.800 L15.200 8.800 M11 11.500 L14.200 14 M6.800 3.500 L5.500 0.800 M9.200 3.500 L10.500 0.800" stroke="#1a5060" stroke-width="1.200" fill="none"/><ellipse cx="8" cy="9" rx="3.700" ry="4.700" fill="#9cc870" stroke="#1a4a50" stroke-width="1.200"/><ellipse cx="7.300" cy="8.300" rx="1.600" ry="2.500" fill="#cce8b0"/><circle cx="8" cy="3.800" r="1.700" fill="#2a6058"/></g></svg>
<span class="t" style="left:1169px;top:52px;letter-spacing:-0.261px;">Debug</span>
<svg style="position:absolute;left:1268px;top:52px" width="8" height="6" viewBox="0 0 8 6"><path d="M0.500 0.500 L3 3 L0.500 5.500 M4.500 0.500 L7 3 L4.500 5.500" fill="none" stroke="#4a4aa0" stroke-width="1.200"/></svg>
</div>
<div class="panel" id="pe" style="left:4px;top:76px;width:304px;height:918px"></div>
<svg class="tabcurve" style="left:5px;top:76px" width="170" height="24" viewBox="0 0 170 24"><path d="M0 24 L0 7 Q0 1 6 1 L128 1 C 142 1 146 23 161 23 L161 24 Z" fill="url(#gInact)"/><path d="M128 0.500 C 142 0.500 146 23.500 161 23.500" fill="none" stroke="#a0a0a0"/></svg>
<svg class="ic" style="left:10px;top:80px" width="16" height="16" viewBox="0 0 16 16"><path d="M2.500 1 v13 M3 4.500 h3 M3 10.500 h3" stroke="#5a6888" fill="none"/><rect x="6" y="2" width="5" height="5" fill="#c87820"/><rect x="6" y="8" width="5" height="5" fill="#c87820"/><path d="M7 3h1v1h-1zM9 3h1v1h-1zM7 5h1v1h-1zM9 5h1v1h-1zM7 9h1v1h-1zM9 9h1v1h-1zM7 11h1v1h-1zM9 11h1v1h-1z" fill="#fff4b0"/></svg>
<span class="t" style="left:28px;top:81px;letter-spacing:-0.401px;">Package Explorer</span>
<svg class="ic" style="left:122px;top:80px" width="16" height="16" viewBox="0 0 16 16"><path d="M3.500 3.500 H6 L8 5.500 L10 3.500 H12.500 V6 L10.500 8 L12.500 10 V12.500 H10 L8 10.500 L6 12.500 H3.500 V10 L5.500 8 L3.500 6 Z" fill="#fff" stroke="#606060" stroke-width="1"/></svg>
<svg class="ic" style="left:161px;top:80px" width="16" height="16" viewBox="0 0 16 16"><path d="M4.500 3 v10.500 h4 M4.500 8 h4" stroke="#707890" fill="none"/><circle cx="4.500" cy="2.500" r="2.200" fill="#58a858" stroke="#2a7a30" stroke-width=".8"/><circle cx="9.500" cy="8" r="2.200" fill="#58a858" stroke="#2a7a30" stroke-width=".8"/><circle cx="9.500" cy="13.300" r="2.200" fill="#58a858" stroke="#2a7a30" stroke-width=".8"/></svg>
<span class="t" style="left:180px;top:81px;letter-spacing:-0.160px;">Hierarchy</span>
<div class="tabend" style="left:228px;top:76px"></div>
<div class="mini" style="left:273px;top:81px"></div><div class="maxi" style="left:291px;top:81px"></div>
<svg class="ic" style="left:214px;top:105px" width="16" height="16" viewBox="0 0 16 16"><defs><linearGradient id="cag" x1="0" y1="0" x2="0" y2="1"><stop offset="0" stop-color="#ffffff"/><stop offset="1" stop-color="#d4ecfc"/></linearGradient></defs><rect x="0.500" y="2.500" width="10" height="10" fill="#d8e4f4" stroke="#a8b8d8"/><rect x="2.500" y="4.500" width="10" height="10" fill="url(#cag)" stroke="#8a98c0"/><path d="M4.500 9.700 h6.500" stroke="#1a4a8a" stroke-width="1.500"/></svg>
<svg class="ic" style="left:235px;top:105px" width="16" height="16" viewBox="0 0 16 16"><path d="M0.800 4.500 L5 0.800 V3 H12.500 V6 H5 V8.200 Z" fill="#fbe8a0" stroke="#d09010" stroke-width=".9" stroke-linejoin="round"/><path d="M16 11.500 L11.800 7.800 V10 H4.500 V13 H11.800 V15.200 Z" fill="#f8d860" stroke="#d09010" stroke-width=".9" stroke-linejoin="round"/></svg>
<div class="vsep" style="left:257px;top:104px;height:18px"></div>
<svg class="ic" style="left:267px;top:105px" width="16" height="16" viewBox="0 0 16 16"><defs><radialGradient id="fd1" cx=".4" cy=".3" r=".8"><stop offset="0" stop-color="#e8e8e8"/><stop offset="1" stop-color="#bcbcbc"/></radialGradient><radialGradient id="fd2" cx=".4" cy=".3" r=".8"><stop offset="0" stop-color="#c0c0c0"/><stop offset="1" stop-color="#888"/></radialGradient></defs><circle cx="4.800" cy="5.300" r="3.300" fill="url(#fd1)"/><circle cx="10.700" cy="7" r="3.300" fill="url(#fd1)"/><circle cx="5.800" cy="11.500" r="3.500" fill="url(#fd2)"/></svg>
<div class="vmenu" style="left:291px;top:106px"></div>
<div class="white" style="left:7px;top:126px;width:298px;height:865px"></div>
<div class="hline" style="left:7px;top:125px;width:298px"></div>
<svg class="ic" style="left:29px;top:127px" width="16" height="16" viewBox="0 0 16 16"><g transform="translate(0 0)"><defs><linearGradient id="flp" x1="0" y1="0" x2="0" y2="1"><stop offset="0" stop-color="#b8e6fc"/><stop offset="1" stop-color="#94baf0"/></linearGradient></defs><path d="M2 5.200 L4 2.800 L7.500 2.800 L9.500 8.500 L4 8.500 L2 12.500Z" fill="#fbe2a0"/><path d="M4 2.500h3" stroke="#e0a848"/><path d="M4 4.500h3" stroke="#f8d880"/><path d="M0 4.500h2.500" stroke="#8a7090"/>
<path d="M4.800 9 H14.600 L10.800 13 H2.200Z" fill="url(#flp)"/><path d="M1.500 5 V12.500 L2.500 13.500 H11 L15.500 8.500 H4.500 L1.700 12.300" fill="none" stroke="#2040b0" stroke-width="1" stroke-linejoin="round"/></g><path d="M10.5 0.5 H14.5 V6.5 M14.5 0.5 H10.5 L8.5 2.5 V4.5 L10.5 6.5 H12.5" fill="#fff" stroke="#5a8a1a" stroke-width="1" stroke-linejoin="round"/><path d="M10 4h3" stroke="#8a7090" stroke-width="1"/></svg>
<span class="t" style="left:50px;top:127px;letter-spacing:0.071px;">Copy of ImprovedHelloWorld</span>
<svg class="ic" style="left:29px;top:145px" width="16" height="16" viewBox="0 0 16 16"><g transform="translate(0 0)"><defs><linearGradient id="flp" x1="0" y1="0" x2="0" y2="1"><stop offset="0" stop-color="#b8e6fc"/><stop offset="1" stop-color="#94baf0"/></linearGradient></defs><path d="M2 5.200 L4 2.800 L7.500 2.800 L9.500 8.500 L4 8.500 L2 12.500Z" fill="#fbe2a0"/><path d="M4 2.500h3" stroke="#e0a848"/><path d="M4 4.500h3" stroke="#f8d880"/><path d="M0 4.500h2.500" stroke="#8a7090"/>
<path d="M4.800 9 H14.600 L10.800 13 H2.200Z" fill="url(#flp)"/><path d="M1.500 5 V12.500 L2.500 13.500 H11 L15.500 8.500 H4.500 L1.700 12.300" fill="none" stroke="#2040b0" stroke-width="1" stroke-linejoin="round"/></g><path d="M10.5 0.5 H14.5 V6.5 M14.5 0.5 H10.5 L8.5 2.5 V4.5 L10.5 6.5 H12.5" fill="#fff" stroke="#5a8a1a" stroke-width="1" stroke-linejoin="round"/><path d="M10 4h3" stroke="#8a7090" stroke-width="1"/></svg>
<span class="t" style="left:50px;top:145px;letter-spacing:-0.189px;">DatabaseAndroid</span>
<svg class="ic" style="left:29px;top:163px" width="16" height="16" viewBox="0 0 16 16"><g transform="translate(0 0)"><defs><linearGradient id="flp" x1="0" y1="0" x2="0" y2="1"><stop offset="0" stop-color="#b8e6fc"/><stop offset="1" stop-color="#94baf0"/></linearGradient></defs><path d="M2 5.200 L4 2.800 L7.500 2.800 L9.500 8.500 L4 8.500 L2 12.500Z" fill="#fbe2a0"/><path d="M4 2.500h3" stroke="#e0a848"/><path d="M4 4.500h3" stroke="#f8d880"/><path d="M0 4.500h2.500" stroke="#8a7090"/>
<path d="M4.800 9 H14.600 L10.800 13 H2.200Z" fill="url(#flp)"/><path d="M1.500 5 V12.500 L2.500 13.500 H11 L15.500 8.500 H4.500 L1.700 12.300" fill="none" stroke="#2040b0" stroke-width="1" stroke-linejoin="round"/></g><path d="M10.5 0.5 H14.5 V6.5 M14.5 0.5 H10.5 L8.5 2.5 V4.5 L10.5 6.5 H12.5" fill="#fff" stroke="#5a8a1a" stroke-width="1" stroke-linejoin="round"/><path d="M10 4h3" stroke="#8a7090" stroke-width="1"/></svg>
<span class="t" style="left:50px;top:163px;letter-spacing:-0.163px;">DatabaseHelloWorld</span>
<svg class="ic" style="left:29px;top:181px" width="16" height="16" viewBox="0 0 16 16"><g transform="translate(0 1)"><defs><linearGradient id="flp" x1="0" y1="0" x2="0" y2="1"><stop offset="0" stop-color="#b8e6fc"/><stop offset="1" stop-color="#94baf0"/></linearGradient></defs><path d="M2 5.200 L4 2.800 L7.500 2.800 L9.500 8.500 L4 8.500 L2 12.500Z" fill="#fbe2a0"/><path d="M4 2.500h3" stroke="#e0a848"/><path d="M4 4.500h3" stroke="#f8d880"/><path d="M0 4.500h2.500" stroke="#8a7090"/>
<path d="M4.800 9 H14.600 L10.800 13 H2.200Z" fill="url(#flp)"/><path d="M1.500 5 V12.500 L2.500 13.500 H11 L15.500 8.500 H4.500 L1.700 12.300" fill="none" stroke="#2040b0" stroke-width="1" stroke-linejoin="round"/></g><circle cx="3.600" cy="3.600" r="3.300" fill="#5a98d8" stroke="#386898" stroke-width=".7"/><path d="M1.500 2.500 q1.500 -1.800 3.200 -.6 q.5 1.500 -1 2.200 q-1.500 .3 -2.200 -1.600z" fill="#78c058"/><circle cx="2.700" cy="2.300" r=".9" fill="#e8f4ff" opacity=".8"/>
<path d="M9.500 1 V6 Q9.500 7.500 8 7.500" fill="none" stroke="#3a5aa0" stroke-width="1.100"/><path d="M14.500 1.500 H12.500 Q11.500 1.500 11.500 2.800 T12.800 4.200 T14 5.800 T12.800 7.400 H11.200" fill="none" stroke="#3a5aa0" stroke-width="1.100"/></svg>
<span class="t" style="left:50px;top:181px;letter-spacing:-0.027px;">gregjacobs.info</span>
<svg class="ic" style="left:29px;top:199px" width="16" height="16" viewBox="0 0 16 16"><g transform="translate(0 0)"><defs><linearGradient id="flp" x1="0" y1="0" x2="0" y2="1"><stop offset="0" stop-color="#b8e6fc"/><stop offset="1" stop-color="#94baf0"/></linearGradient></defs><path d="M2 5.200 L4 2.800 L7.500 2.800 L9.500 8.500 L4 8.500 L2 12.500Z" fill="#fbe2a0"/><path d="M4 2.500h3" stroke="#e0a848"/><path d="M4 4.500h3" stroke="#f8d880"/><path d="M0 4.500h2.500" stroke="#8a7090"/>
<path d="M4.800 9 H14.600 L10.800 13 H2.200Z" fill="url(#flp)"/><path d="M1.500 5 V12.500 L2.500 13.500 H11 L15.500 8.500 H4.500 L1.700 12.300" fill="none" stroke="#2040b0" stroke-width="1" stroke-linejoin="round"/></g><path d="M10.5 0.5 H14.5 V6.5 M14.5 0.5 H10.5 L8.5 2.5 V4.5 L10.5 6.5 H12.5" fill="#fff" stroke="#5a8a1a" stroke-width="1" stroke-linejoin="round"/><path d="M10 4h3" stroke="#8a7090" stroke-width="1"/></svg>
<span class="t" style="left:50px;top:199px;letter-spacing:0.056px;">HelloWorld</span>
<svg class="ic" style="left:29px;top:217px" width="16" height="16" viewBox="0 0 16 16"><g transform="translate(0 0)"><defs><linearGradient id="flp" x1="0" y1="0" x2="0" y2="1"><stop offset="0" stop-color="#b8e6fc"/><stop offset="1" stop-color="#94baf0"/></linearGradient></defs><path d="M2 5.200 L4 2.800 L7.500 2.800 L9.500 8.500 L4 8.500 L2 12.500Z" fill="#fbe2a0"/><path d="M4 2.500h3" stroke="#e0a848"/><path d="M4 4.500h3" stroke="#f8d880"/><path d="M0 4.500h2.500" stroke="#8a7090"/>
<path d="M4.800 9 H14.600 L10.800 13 H2.200Z" fill="url(#flp)"/><path d="M1.500 5 V12.500 L2.500 13.500 H11 L15.500 8.500 H4.500 L1.700 12.300" fill="none" stroke="#2040b0" stroke-width="1" stroke-linejoin="round"/></g><path d="M10.5 0.5 H14.5 V6.5 M14.5 0.5 H10.5 L8.5 2.5 V4.5 L10.5 6.5 H12.5" fill="#fff" stroke="#5a8a1a" stroke-width="1" stroke-linejoin="round"/><path d="M10 4h3" stroke="#8a7090" stroke-width="1"/></svg>
<span class="t" style="left:50px;top:217px;letter-spacing:0.086px;">ImprovedHelloWorld</span>
<svg class="ic" style="left:29px;top:235px" width="16" height="16" viewBox="0 0 16 16"><g transform="translate(0 0)"><defs><linearGradient id="flp" x1="0" y1="0" x2="0" y2="1"><stop offset="0" stop-color="#b8e6fc"/><stop offset="1" stop-color="#94baf0"/></linearGradient></defs><path d="M2 5.200 L4 2.800 L7.500 2.800 L9.500 8.500 L4 8.500 L2 12.500Z" fill="#fbe2a0"/><path d="M4 2.500h3" stroke="#e0a848"/><path d="M4 4.500h3" stroke="#f8d880"/><path d="M0 4.500h2.500" stroke="#8a7090"/>
<path d="M4.800 9 H14.600 L10.800 13 H2.200Z" fill="url(#flp)"/><path d="M1.500 5 V12.500 L2.500 13.500 H11 L15.500 8.500 H4.500 L1.700 12.300" fill="none" stroke="#2040b0" stroke-width="1" stroke-linejoin="round"/></g><path d="M10.5 0.5 H14.5 V6.5 M14.5 0.5 H10.5 L8.5 2.5 V4.5 L10.5 6.5 H12.5" fill="#fff" stroke="#5a8a1a" stroke-width="1" stroke-linejoin="round"/><path d="M10 4h3" stroke="#8a7090" stroke-width="1"/><path d="M3.400 8 L7 15.400 L-0.200 15.400 Z" fill="#f8d060" stroke="#d09828" stroke-width="1" stroke-linejoin="round"/><rect x="2.950" y="10.300" width=".95" height="2.600" fill="#201000"/><rect x="2.950" y="13.500" width=".95" height=".95" fill="#201000"/></svg>
<span class="t" style="left:50px;top:235px;letter-spacing:0.071px;">InformationTracker</span>
<svg class="ic" style="left:29px;top:253px" width="16" height="16" viewBox="0 0 16 16"><g transform="translate(0 0)"><defs><linearGradient id="flp" x1="0" y1="0" x2="0" y2="1"><stop offset="0" stop-color="#b8e6fc"/><stop offset="1" stop-color="#94baf0"/></linearGradient></defs><path d="M2 5.200 L4 2.800 L7.500 2.800 L9.500 8.500 L4 8.500 L2 12.500Z" fill="#fbe2a0"/><path d="M4 2.500h3" stroke="#e0a848"/><path d="M4 4.500h3" stroke="#f8d880"/><path d="M0 4.500h2.500" stroke="#8a7090"/>
<path d="M4.800 9 H14.600 L10.800 13 H2.200Z" fill="url(#flp)"/><path d="M1.500 5 V12.500 L2.500 13.500 H11 L15.500 8.500 H4.500 L1.700 12.300" fill="none" stroke="#2040b0" stroke-width="1" stroke-linejoin="round"/></g><path d="M10.5 0.5 H14.5 V6.5 M14.5 0.5 H10.5 L8.5 2.5 V4.5 L10.5 6.5 H12.5" fill="#fff" stroke="#5a8a1a" stroke-width="1" stroke-linejoin="round"/><path d="M10 4h3" stroke="#8a7090" stroke-width="1"/></svg>
<span class="t" style="left:50px;top:253px;letter-spacing:-0.178px;">RandomQuotes</span>
<svg class="ic" style="left:48px;top:271px" width="16" height="16" viewBox="0 0 16 16"><g transform="translate(0 0)"><defs><linearGradient id="yfg" x1="0" y1="0" x2="0" y2="1"><stop offset="0" stop-color="#fdf0c8"/><stop offset="1" stop-color="#f4c870"/></linearGradient></defs><path d="M1.500 12.500 V4.500 Q1.500 3.500 2.500 3.500 H5.500 Q6.500 3.500 6.800 5 H11.500 Q12.500 5 12.500 6 V8" fill="#fbe8b8" stroke="#c08838" stroke-width=".9"/><path d="M1.300 13.500 L4 8.500 H15.500 L12.300 13.500 Z" fill="url(#yfg)" stroke="#c08838" stroke-width=".9" stroke-linejoin="round"/></g><rect x="8.5" y="3.0" width="6" height="5" fill="#f4d8a8" stroke="#7a4820" stroke-width=".9"/><path d="M11.5 2.0v7M7.5 5.5h8" stroke="#7a4820" stroke-width=".9"/></svg>
<span class="t" style="left:69px;top:271px;letter-spacing:-0.800px;">src</span>
<svg class="ic" style="left:67px;top:289px" width="16" height="16" viewBox="0 0 16 16"><rect x="3.500" y="3.500" width="10" height="10" fill="#e4b888" stroke="#a8602c"/><rect x="4.500" y="4.500" width="3.500" height="3.500" fill="#f8dcb0"/><rect x="9" y="4.500" width="3.500" height="3.500" fill="#f8dcb0"/><rect x="4.500" y="9" width="3.500" height="3.500" fill="#f8dcb0"/><rect x="9" y="9" width="3.500" height="3.500" fill="#f8dcb0"/><path d="M8.500 2 v13 M2 8.500 h13" stroke="#8a4a20" stroke-width="1.100"/></svg>
<span class="t" style="left:88px;top:289px;letter-spacing:0.009px;">com.gregjacobs.randomquotes</span>
<div class="selbox" style="left:84px;top:307px;width:106px;height:17px"></div>
<svg class="ic" style="left:86px;top:307px" width="16" height="16" viewBox="0 0 16 16"><defs><linearGradient id="jfg" x1="0" y1="0" x2="1" y2="1"><stop offset="0" stop-color="#ffffff"/><stop offset="1" stop-color="#d4e4f8"/></linearGradient></defs><path d="M3.500 1.500 H10.500 L13.500 4.500 V14.500 H3.500 Z" fill="url(#jfg)" stroke="#a08840"/><path d="M10.500 1.500 V4.500 H13.500 Z" fill="#f4dca0" stroke="#a08840" stroke-width=".6"/><path d="M9.300 4.500 V10 Q9.300 12 7.300 12 Q6 12 5.500 11" fill="none" stroke="#2a5aa8" stroke-width="1.800"/></svg>
<span class="t" style="left:107px;top:307px;letter-spacing:-0.251px;">DBAdapter.java</span>
<svg class="ic" style="left:86px;top:325px" width="16" height="16" viewBox="0 0 16 16"><defs><linearGradient id="jfg" x1="0" y1="0" x2="1" y2="1"><stop offset="0" stop-color="#ffffff"/><stop offset="1" stop-color="#d4e4f8"/></linearGradient></defs><path d="M3.500 1.500 H10.500 L13.500 4.500 V14.500 H3.500 Z" fill="url(#jfg)" stroke="#a08840"/><path d="M10.500 1.500 V4.500 H13.500 Z" fill="#f4dca0" stroke="#a08840" stroke-width=".6"/><path d="M9.300 4.500 V10 Q9.300 12 7.300 12 Q6 12 5.500 11" fill="none" stroke="#2a5aa8" stroke-width="1.800"/></svg>
<span class="t" style="left:107px;top:325px;letter-spacing:-0.141px;">QuotesMain.java</span>
<svg class="ic" style="left:48px;top:343px" width="16" height="16" viewBox="0 0 16 16"><g transform="translate(0 0.5)"><defs><linearGradient id="yfg" x1="0" y1="0" x2="0" y2="1"><stop offset="0" stop-color="#fdf0c8"/><stop offset="1" stop-color="#f4c870"/></linearGradient></defs><path d="M1.500 12.500 V6 H9 V5 H11.500 Q12.500 5 12.500 6 V8" fill="#fbe8b8" stroke="#c08838" stroke-width=".9"/><path d="M1.300 13.500 L4 8.500 H15.500 L12.300 13.500 Z" fill="url(#yfg)" stroke="#c08838" stroke-width=".9" stroke-linejoin="round"/></g><path d="M3.5 0.5 H7.5 V6.5 M7.5 0.5 H3.5 L1.5 2.5 V4.5 L3.5 6.5 H5.5" fill="#fff" stroke="#5a8a1a" stroke-width="1" stroke-linejoin="round"/><path d="M3 4h3" stroke="#8a7090" stroke-width="1"/><rect x="9.5" y="3.0" width="6" height="5" fill="#f4d8a8" stroke="#7a4820" stroke-width=".9"/><path d="M12.5 2.0v7M8.5 5.5h8" stroke="#7a4820" stroke-width=".9"/></svg>
<span class="t" style="left:69px;top:343px;letter-spacing:-0.357px;">gen <span style="color:#957d47">[Generated Java Files]</span></span>
<svg class="ic" style="left:48px;top:361px" width="16" height="16" viewBox="0 0 16 16"><path d="M12.500 1.500 Q11 2 11.500 4 L13 13.500 H15.500 L13.800 3 Q13.500 1.200 12.500 1.500Z" fill="#f8c838" stroke="#c89010" stroke-width=".8"/><rect x="1" y="5" width="8" height="2.200" fill="#2a68b8"/><rect x="2" y="7.200" width="9" height="2.800" fill="#2a9868"/><rect x="1" y="10" width="10.500" height="3.800" fill="#e07838" stroke="#b04818" stroke-width=".6"/></svg>
<span class="t" style="left:69px;top:361px;letter-spacing:-0.132px;">Android 1.5</span>
<svg class="ic" style="left:48px;top:379px" width="16" height="16" viewBox="0 0 16 16"><g transform="translate(0 0.5)"><defs><linearGradient id="yfg" x1="0" y1="0" x2="0" y2="1"><stop offset="0" stop-color="#fdf0c8"/><stop offset="1" stop-color="#f4c870"/></linearGradient></defs><path d="M1.500 12.500 V6 H9 V5 H11.500 Q12.500 5 12.500 6 V8" fill="#fbe8b8" stroke="#c08838" stroke-width=".9"/><path d="M1.300 13.500 L4 8.500 H15.500 L12.300 13.500 Z" fill="url(#yfg)" stroke="#c08838" stroke-width=".9" stroke-linejoin="round"/></g><path d="M3.5 0.5 H7.5 V6.5 M7.5 0.5 H3.5 L1.5 2.5 V4.5 L3.5 6.5 H5.5" fill="#fff" stroke="#5a8a1a" stroke-width="1" stroke-linejoin="round"/><path d="M3 4h3" stroke="#8a7090" stroke-width="1"/></svg>
<span class="t" style="left:69px;top:379px;letter-spacing:-0.852px;">assets</span>
<svg class="ic" style="left:48px;top:397px" width="16" height="16" viewBox="0 0 16 16"><g transform="translate(0 0.5)"><defs><linearGradient id="yfg" x1="0" y1="0" x2="0" y2="1"><stop offset="0" stop-color="#fdf0c8"/><stop offset="1" stop-color="#f4c870"/></linearGradient></defs><path d="M1.500 12.500 V6 H9 V5 H11.500 Q12.500 5 12.500 6 V8" fill="#fbe8b8" stroke="#c08838" stroke-width=".9"/><path d="M1.300 13.500 L4 8.500 H15.500 L12.300 13.500 Z" fill="url(#yfg)" stroke="#c08838" stroke-width=".9" stroke-linejoin="round"/></g><path d="M3.5 0.5 H7.5 V6.5 M7.5 0.5 H3.5 L1.5 2.5 V4.5 L3.5 6.5 H5.5" fill="#fff" stroke="#5a8a1a" stroke-width="1" stroke-linejoin="round"/><path d="M3 4h3" stroke="#8a7090" stroke-width="1"/></svg>
<span class="t" style="left:69px;top:397px;letter-spacing:-1.069px;">res</span>
<svg class="ic" style="left:67px;top:415px" width="16" height="16" viewBox="0 0 16 16"><g transform="translate(0 0)"><defs><linearGradient id="yfg" x1="0" y1="0" x2="0" y2="1"><stop offset="0" stop-color="#fdf0c8"/><stop offset="1" stop-color="#f4c870"/></linearGradient></defs><path d="M1.500 12.500 V4.500 Q1.500 3.500 2.500 3.500 H5.500 Q6.500 3.500 6.800 5 H11.500 Q12.500 5 12.500 6 V8" fill="#fbe8b8" stroke="#c08838" stroke-width=".9"/><path d="M1.300 13.500 L4 8.500 H15.500 L12.300 13.500 Z" fill="url(#yfg)" stroke="#c08838" stroke-width=".9" stroke-linejoin="round"/></g></svg>
<span class="t" style="left:88px;top:415px;letter-spacing:-0.174px;">drawable</span>
<svg class="ic" style="left:67px;top:433px" width="16" height="16" viewBox="0 0 16 16"><g transform="translate(0 0)"><defs><linearGradient id="yfg" x1="0" y1="0" x2="0" y2="1"><stop offset="0" stop-color="#fdf0c8"/><stop offset="1" stop-color="#f4c870"/></linearGradient></defs><path d="M1.500 12.500 V4.500 Q1.500 3.500 2.500 3.500 H5.500 Q6.500 3.500 6.800 5 H11.500 Q12.500 5 12.500 6 V8" fill="#fbe8b8" stroke="#c08838" stroke-width=".9"/><path d="M1.300 13.500 L4 8.500 H15.500 L12.300 13.500 Z" fill="url(#yfg)" stroke="#c08838" stroke-width=".9" stroke-linejoin="round"/></g></svg>
<span class="t" style="left:88px;top:433px;letter-spacing:0.067px;">layout</span>
<svg class="ic" style="left:86px;top:451px" width="16" height="16" viewBox="0 0 16 16"><defs><linearGradient id="xfg" x1="0" y1="0" x2="0" y2="1"><stop offset="0" stop-color="#ffffff"/><stop offset="1" stop-color="#dce6f6"/></linearGradient></defs><path d="M3.500 1.500 H10.500 L13.500 4.500 V14.500 H3.500 Z" fill="url(#xfg)" stroke="#98a4c4"/><path d="M10.500 1.500 V4.500 H13.500 Z" fill="#f0dca8" stroke="#c0b080" stroke-width=".6"/><path d="M6 5 L11 11.800 M11 5 L6 11.800" stroke="#36486a" stroke-width="1.700"/></svg>
<span class="t" style="left:107px;top:451px;letter-spacing:0.025px;">main.xml</span>
<svg class="ic" style="left:67px;top:469px" width="16" height="16" viewBox="0 0 16 16"><g transform="translate(0 0)"><defs><linearGradient id="yfg" x1="0" y1="0" x2="0" y2="1"><stop offset="0" stop-color="#fdf0c8"/><stop offset="1" stop-color="#f4c870"/></linearGradient></defs><path d="M1.500 12.500 V4.500 Q1.500 3.500 2.500 3.500 H5.500 Q6.500 3.500 6.800 5 H11.500 Q12.500 5 12.500 6 V8" fill="#fbe8b8" stroke="#c08838" stroke-width=".9"/><path d="M1.300 13.500 L4 8.500 H15.500 L12.300 13.500 Z" fill="url(#yfg)" stroke="#c08838" stroke-width=".9" stroke-linejoin="round"/></g></svg>
<span class="t" style="left:88px;top:469px;letter-spacing:-0.489px;">values</span>
<svg class="ic" style="left:86px;top:487px" width="16" height="16" viewBox="0 0 16 16"><defs><linearGradient id="xfg" x1="0" y1="0" x2="0" y2="1"><stop offset="0" stop-color="#ffffff"/><stop offset="1" stop-color="#dce6f6"/></linearGradient></defs><path d="M3.500 1.500 H10.500 L13.500 4.500 V14.500 H3.500 Z" fill="url(#xfg)" stroke="#98a4c4"/><path d="M10.500 1.500 V4.500 H13.500 Z" fill="#f0dca8" stroke="#c0b080" stroke-width=".6"/><path d="M6 5 L11 11.800 M11 5 L6 11.800" stroke="#36486a" stroke-width="1.700"/></svg>
<span class="t" style="left:107px;top:487px;letter-spacing:-0.128px;">strings.xml</span>
<svg class="ic" style="left:48px;top:505px" width="16" height="16" viewBox="0 0 16 16"><defs><linearGradient id="afg" x1="0" y1="0" x2="0" y2="1"><stop offset="0" stop-color="#ffffff"/><stop offset=".6" stop-color="#f4f9fd"/><stop offset="1" stop-color="#b8d4ec"/></linearGradient></defs><path d="M2.500 0.500 H10 L13.500 4 V14.500 H2.500 Z" fill="url(#afg)" stroke="#b4c4d8"/><path d="M10 0.500 V4 H13.500 Z" fill="#f8c080" stroke="#f0a860" stroke-width=".5"/><path d="M6 5.200 H11 V12 M11 5.200 H6 L4.300 7.200 V9.800 L6 11.700 H9" fill="none" stroke="#4a9a28" stroke-width="1.100" stroke-linejoin="round"/><rect x="6.500" y="7.500" width="2.500" height="2.500" fill="#d0dcec"/></svg>
<span class="t" style="left:69px;top:505px;letter-spacing:0.069px;">AndroidManifest.xml</span>
<svg class="ic" style="left:48px;top:523px" width="16" height="16" viewBox="0 0 16 16"><path d="M3.500 1.500 H10.500 L13.500 4.500 V14.500 H3.500 Z" fill="#fffefa" stroke="#9a8040" stroke-width="1.100"/><path d="M10.500 1.500 V4.500 H13.500 Z" fill="#e8d8a0" stroke="#9a8040" stroke-width=".6"/><path d="M5.500 5.500h4M5.500 7.500h6M5.500 9.500h6M5.500 11.500h6M5.500 13.200h4" stroke="#4a68a8" stroke-width=".9"/></svg>
<span class="t" style="left:69px;top:523px;letter-spacing:-0.031px;">default.properties</span>
<svg class="ic" style="left:29px;top:541px" width="16" height="16" viewBox="0 0 16 16"><g transform="translate(0 0)"><defs><linearGradient id="flp" x1="0" y1="0" x2="0" y2="1"><stop offset="0" stop-color="#b8e6fc"/><stop offset="1" stop-color="#94baf0"/></linearGradient></defs><path d="M2 5.200 L4 2.800 L7.500 2.800 L9.500 8.500 L4 8.500 L2 12.500Z" fill="#fbe2a0"/><path d="M4 2.500h3" stroke="#e0a848"/><path d="M4 4.500h3" stroke="#f8d880"/><path d="M0 4.500h2.500" stroke="#8a7090"/>
<path d="M4.800 9 H14.600 L10.800 13 H2.200Z" fill="url(#flp)"/><path d="M1.500 5 V12.500 L2.500 13.500 H11 L15.500 8.500 H4.500 L1.700 12.300" fill="none" stroke="#2040b0" stroke-width="1" stroke-linejoin="round"/></g><path d="M10.5 0.5 H14.5 V6.5 M14.5 0.5 H10.5 L8.5 2.5 V4.5 L10.5 6.5 H12.5" fill="#fff" stroke="#5a8a1a" stroke-width="1" stroke-linejoin="round"/><path d="M10 4h3" stroke="#8a7090" stroke-width="1"/><path d="M3.400 8 L7 15.400 L-0.200 15.400 Z" fill="#f8d060" stroke="#d09828" stroke-width="1" stroke-linejoin="round"/><rect x="2.950" y="10.300" width=".95" height="2.600" fill="#201000"/><rect x="2.950" y="13.500" width=".95" height=".95" fill="#201000"/></svg>
<span class="t" style="left:50px;top:541px;letter-spacing:-0.381px;">StatsTracker</span>
<div class="panel" id="ed" style="left:311px;top:76px;width:774px;height:655px"></div>
<div class="bluebox" style="left:312px;top:100px;width:772px;height:630px"></div>
<div class="white" style="left:314px;top:102px;width:768px;height:590px"></div>
<svg class="ic" style="left:315px;top:80px" width="16" height="16" viewBox="0 0 16 16"><defs><linearGradient id="jfg" x1="0" y1="0" x2="1" y2="1"><stop offset="0" stop-color="#ffffff"/><stop offset="1" stop-color="#d4e4f8"/></linearGradient></defs><path d="M3.500 1.500 H10.500 L13.500 4.500 V14.500 H3.500 Z" fill="url(#jfg)" stroke="#a08840"/><path d="M10.500 1.500 V4.500 H13.500 Z" fill="#f4dca0" stroke="#a08840" stroke-width=".6"/><path d="M9.300 4.500 V10 Q9.300 12 7.300 12 Q6 12 5.500 11" fill="none" stroke="#2a5aa8" stroke-width="1.800"/></svg>
<span class="t" style="left:335px;top:81px;letter-spacing:-0.141px;">QuotesMain.java</span>
<div class="tabsep" style="left:450px;top:76px"></div>
<svg class="ic" style="left:455px;top:80px" width="16" height="16" viewBox="0 0 16 16"><defs><linearGradient id="jfg" x1="0" y1="0" x2="1" y2="1"><stop offset="0" stop-color="#ffffff"/><stop offset="1" stop-color="#d4e4f8"/></linearGradient></defs><path d="M3.500 1.500 H10.500 L13.500 4.500 V14.500 H3.500 Z" fill="url(#jfg)" stroke="#a08840"/><path d="M10.500 1.500 V4.500 H13.500 Z" fill="#f4dca0" stroke="#a08840" stroke-width=".6"/><path d="M9.300 4.500 V10 Q9.300 12 7.300 12 Q6 12 5.500 11" fill="none" stroke="#2a5aa8" stroke-width="1.800"/></svg>
<span class="t" style="left:474px;top:81px;letter-spacing:-0.251px;">DBAdapter.java</span>
<svg class="tabcurve" style="left:575px;top:76px" width="140" height="26" viewBox="0 0 140 26"><defs><linearGradient id="gAct" x1="0" y1="0" x2="0" y2="1"><stop offset="0" stop-color="#eef3f9"/><stop offset="0.100" stop-color="#dfe8f2"/><stop offset="0.450" stop-color="#b4c9e0"/><stop offset="0.750" stop-color="#9cb7d4"/><stop offset="1" stop-color="#99b4d1"/></linearGradient></defs><path d="M6.5 26 L6.5 7 Q6.5 0.5 13 0.5 L100 0.500 C 114 0.500 118 23.500 135 23.500 L140 23.500 L140 26 Z" fill="url(#gAct)"/><path d="M6.5 24 L6.5 7 Q6.5 0.5 13 0.5 L100 0.500 C 114 0.500 118 23.500 135 23.500" fill="none" stroke="#a0a0a0"/></svg>
<svg class="ic" style="left:585px;top:80px" width="16" height="16" viewBox="0 0 16 16"><defs><linearGradient id="afg" x1="0" y1="0" x2="0" y2="1"><stop offset="0" stop-color="#ffffff"/><stop offset=".6" stop-color="#f4f9fd"/><stop offset="1" stop-color="#b8d4ec"/></linearGradient></defs><path d="M2.500 0.500 H10 L13.500 4 V14.500 H2.500 Z" fill="url(#afg)" stroke="#b4c4d8"/><path d="M10 0.500 V4 H13.500 Z" fill="#f8c080" stroke="#f0a860" stroke-width=".5"/><path d="M6 5.200 H11 V12 M11 5.200 H6 L4.300 7.200 V9.800 L6 11.700 H9" fill="none" stroke="#4a9a28" stroke-width="1.100" stroke-linejoin="round"/><rect x="6.500" y="7.500" width="2.500" height="2.500" fill="#d0dcec"/></svg>
<span class="t" style="left:605px;top:81px;letter-spacing:-0.128px;">strings.xml</span>
<svg class="ic" style="left:667px;top:80px" width="16" height="16" viewBox="0 0 16 16"><path d="M3.500 3.500 H6 L8 5.500 L10 3.500 H12.500 V6 L10.500 8 L12.500 10 V12.500 H10 L8 10.500 L6 12.500 H3.500 V10 L5.500 8 L3.500 6 Z" fill="#fff" stroke="#606060" stroke-width="1"/></svg>
<svg class="ic" style="left:705px;top:80px" width="16" height="16" viewBox="0 0 16 16"><defs><linearGradient id="afg" x1="0" y1="0" x2="0" y2="1"><stop offset="0" stop-color="#ffffff"/><stop offset=".6" stop-color="#f4f9fd"/><stop offset="1" stop-color="#b8d4ec"/></linearGradient></defs><path d="M2.500 0.500 H10 L13.500 4 V14.500 H2.500 Z" fill="url(#afg)" stroke="#b4c4d8"/><path d="M10 0.500 V4 H13.500 Z" fill="#f8c080" stroke="#f0a860" stroke-width=".5"/><path d="M6 5.200 H11 V12 M11 5.200 H6 L4.300 7.200 V9.800 L6 11.700 H9" fill="none" stroke="#4a9a28" stroke-width="1.100" stroke-linejoin="round"/><rect x="6.500" y="7.500" width="2.500" height="2.500" fill="#d0dcec"/></svg>
<span class="t" style="left:725px;top:81px;letter-spacing:0.025px;">main.xml</span>
<div class="tabend" style="left:793px;top:76px"></div>
<div class="mini" style="left:1050px;top:81px"></div><div class="maxi" style="left:1068px;top:81px"></div>
<div style="position:absolute;left:314px;top:102px;width:12px;height:590px;background:#f0f0f0"></div>
<div style="position:absolute;left:334px;top:102px;width:1px;height:590px;background:#f3f3f3"></div>
<div style="position:absolute;left:335px;top:221px;width:717px;height:17px;background:#e8f2fe"></div>
<div style="position:absolute;left:314px;top:221px;width:12px;height:17px;box-sizing:border-box;border-top:1px solid #3a94ff;border-bottom:1px solid #3a94ff;background:conic-gradient(#ffffff 25%,#2a8cff 0 50%,#ffffff 0 75%,#2a8cff 0) 0 0/2px 2px"></div>
<pre id="code"><span class="tg">&lt;?xml</span> <span class="at">version</span>=<span class="va">"1.0"</span> <span class="at">encoding</span>=<span class="va">"utf-8"</span><span class="tg">?&gt;</span>
<span class="tg">&lt;resources&gt;</span>
    <span class="tg">&lt;string</span> <span class="at">name</span>=<span class="va">"Quote"</span><span class="tg">&gt;</span>Please Enter A Quote:<span class="tg">&lt;/string&gt;</span>
    <span class="tg">&lt;string</span> <span class="at">name</span>=<span class="va">"app_name"</span><span class="tg">&gt;</span>Random Quotes<span class="tg">&lt;/string&gt;</span>
    <span class="tg">&lt;string</span> <span class="at">name</span>=<span class="va">"press"</span><span class="tg">&gt;</span>Press Me!<span class="tg">&lt;/string&gt;</span>
    <span class="tg">&lt;string</span> <span class="at">name</span>=<span class="va">"genRan"</span><span class="tg">&gt;</span>Generate Random Quote!<span class="tg">&lt;/string&gt;</span>
<span class="tg">&lt;/resources&gt;</span></pre>
<div style="position:absolute;left:1052px;top:102px;width:18px;height:590px;background:#f0f0f0"></div>
<div style="position:absolute;left:1070px;top:102px;width:12px;height:590px;background:#f0f0f0"></div>
<div style="position:absolute;left:314px;top:692px;width:768px;height:16px;background:#f0f0f0"></div>
<div class="arr up" style="left:1057px;top:109px"></div><div class="arr down" style="left:1057px;top:681px"></div>
<div class="arr left" style="left:341px;top:696px"></div><div class="arr right" style="left:1042px;top:696px"></div>
<div style="position:absolute;left:1071px;top:106px;width:8px;height:8px;background:#fbc824;border:1px solid #9a9cb0;box-sizing:border-box"></div>
<div style="position:absolute;left:1069px;top:118px;width:12px;height:1px;background:#787878"></div>
<div style="position:absolute;left:1071px;top:119px;width:9px;height:5px;background:#fdf0c8;border:1px solid #f8d050;box-sizing:border-box"></div>
<div class="hline" style="left:314px;top:708px;width:768px"></div>
<div style="position:absolute;left:314px;top:709px;width:768px;height:18px;background:#f0f0f0"></div>
<div style="position:absolute;left:375px;top:708px;width:65px;height:20px;background:#fff;border:1px solid #a0a0a0;border-top:none;border-radius:0 0 4px 4px;box-sizing:border-box"></div>
<span class="t" style="left:318px;top:710px;letter-spacing:-0.548px;">Resources</span>
<span class="t" style="left:379px;top:710px;letter-spacing:-0.104px;">strings.xml</span>
<div class="panel" id="ol" style="left:1088px;top:76px;width:188px;height:655px"></div>
<svg class="tabcurve" style="left:1088px;top:76px" width="130" height="24" viewBox="0 0 130 24"><path d="M1 24 L1 7 Q1 1 7 1 L78 1 C 92 1 96 23 112 23 L112 24 Z" fill="url(#gInact)"/><path d="M78 0.500 C 92 0.500 96 23.500 112 23.500" fill="none" stroke="#a0a0a0"/></svg>
<svg class="ic" style="left:1093px;top:80px" width="16" height="16" viewBox="0 0 16 16"><rect x="1.500" y="1.500" width="5" height="5" fill="#dceafa" stroke="#2a68c0"/><rect x="1.500" y="9.500" width="5" height="5" fill="#dceafa" stroke="#2a68c0"/><rect x="8.500" y="5.500" width="2.500" height="2.500" fill="#fff" stroke="#2a68c0" stroke-width=".9"/><path d="M9 3.500h5.500M12.500 6.800h2M8.500 12.500h6" stroke="#2a68c0"/></svg>
<span class="t" style="left:1112px;top:81px;letter-spacing:0.088px;">Outline</span>
<svg class="ic" style="left:1156px;top:80px" width="16" height="16" viewBox="0 0 16 16"><path d="M3.500 3.500 H6 L8 5.500 L10 3.500 H12.500 V6 L10.500 8 L12.500 10 V12.500 H10 L8 10.500 L6 12.500 H3.500 V10 L5.500 8 L3.500 6 Z" fill="#fff" stroke="#606060" stroke-width="1"/></svg>
<div class="mini" style="left:1241px;top:81px"></div><div class="maxi" style="left:1259px;top:81px"></div>
<svg class="ic" style="left:1212px;top:105px" width="16" height="16" viewBox="0 0 16 16"><defs><radialGradient id="fd1" cx=".4" cy=".3" r=".8"><stop offset="0" stop-color="#e8e8e8"/><stop offset="1" stop-color="#bcbcbc"/></radialGradient><radialGradient id="fd2" cx=".4" cy=".3" r=".8"><stop offset="0" stop-color="#c0c0c0"/><stop offset="1" stop-color="#888"/></radialGradient></defs><circle cx="4.800" cy="5.300" r="3.300" fill="url(#fd1)"/><circle cx="10.700" cy="7" r="3.300" fill="url(#fd1)"/><circle cx="5.800" cy="11.500" r="3.500" fill="url(#fd2)"/></svg>
<svg class="ic" style="left:1235px;top:105px" width="16" height="16" viewBox="0 0 16 16"><defs><linearGradient id="cag" x1="0" y1="0" x2="0" y2="1"><stop offset="0" stop-color="#ffffff"/><stop offset="1" stop-color="#d4ecfc"/></linearGradient></defs><rect x="0.500" y="2.500" width="10" height="10" fill="#d8e4f4" stroke="#a8b8d8"/><rect x="2.500" y="4.500" width="10" height="10" fill="url(#cag)" stroke="#8a98c0"/><path d="M4.500 9.700 h6.500" stroke="#1a4a8a" stroke-width="1.500"/></svg>
<div class="vmenu" style="left:1259px;top:106px"></div>
<div class="hline" style="left:1090px;top:125px;width:183px"></div>
<div class="white" style="left:1090px;top:126px;width:184px;height:602px"></div>
<svg class="ic" style="left:1113px;top:127px" width="16" height="16" viewBox="0 0 16 16"><text x="0" y="12.800" font-family="Liberation Sans" font-weight="bold" font-size="12.500" fill="#1a3a78">?</text><text x="9.300" y="12.800" font-family="Liberation Sans" font-weight="bold" font-size="12.500" fill="#1a3a78">?</text><path d="M6.500 8.500h2.800M6.500 10.500h2.800" stroke="#1a3a78" stroke-width="1"/></svg>
<span class="t" style="left:1134px;top:127px;letter-spacing:-0.169px;">xml</span>
<svg class="ic" style="left:1113px;top:145px" width="16" height="16" viewBox="0 0 16 16"><rect x="2.500" y="2.500" width="11" height="11" fill="#f4f8fe" stroke="#4a78c0"/><text x="4.900" y="12" font-family="Liberation Sans" font-weight="bold" font-size="10.500" fill="#1a2a88">e</text></svg>
<span class="t" style="left:1134px;top:145px;letter-spacing:-0.375px;">resources</span>
<div class="panel" id="bt" style="left:311px;top:734px;width:965px;height:260px"></div>
<svg class="ic" style="left:315px;top:738px" width="16" height="16" viewBox="0 0 16 16"><defs><linearGradient id="pbg" x1="0" y1="0" x2="0" y2="1"><stop offset="0" stop-color="#a89858"/><stop offset="1" stop-color="#5a70a8"/></linearGradient></defs><path d="M1.500 0.500 H12 L14.500 2.500 L13 5 L13.500 8 L12.500 11 L14.500 13 L13.500 14.500 H1.500 Z" fill="#f8fcff" stroke="#b4c8e8" stroke-width=".9"/><path d="M1.500 0.500 V14.500 H13.500" fill="none" stroke="url(#pbg)" stroke-width="1.100"/><path d="M1.500 0.500 H12" stroke="#a89858" stroke-width="1"/><path d="M10.400 1 V14 M2 7.400 H13" stroke="#b8c4dc" stroke-width=".9"/><circle cx="6.200" cy="4.200" r="2.500" fill="#e84048"/><path d="M6.200 8.600 L9 14 H3.400 Z" fill="#f0a020" stroke="#d08810" stroke-width=".6" stroke-linejoin="round"/></svg>
<span class="t" style="left:335px;top:739px;letter-spacing:-0.198px;">Problems</span>
<svg class="ic" style="left:394px;top:738px" width="16" height="16" viewBox="0 0 16 16"><text x="1.500" y="11.500" font-family="Liberation Sans" font-weight="bold" font-size="11.500" fill="#3a6ab8">@</text></svg>
<span class="t" style="left:413px;top:739px;letter-spacing:-0.570px;">Javadoc</span>
<svg class="ic" style="left:463px;top:738px" width="16" height="16" viewBox="0 0 16 16"><defs><linearGradient id="dcg" x1="0" y1="0" x2="1" y2="1"><stop offset="0" stop-color="#ffffff"/><stop offset="1" stop-color="#dce8f8"/></linearGradient></defs><path d="M1.500 0.500 H8.500 L11.500 3.500 V13.500 H1.500 Z" fill="url(#dcg)" stroke="#b08828"/><path d="M8.500 0.500 V3.500 H11.500 Z" fill="#e8c878" stroke="#b08828" stroke-width=".5"/><path d="M5.500 3.500 Q4.500 4 4.500 5.300 Q4.500 6.300 3.500 6.600 Q4.500 7 4.500 8 Q4.500 9.500 5.500 10" fill="none" stroke="#2a5a98" stroke-width="1"/><path d="M6.300 6h2.700M6.300 8h2.700" stroke="#2a5a98" stroke-width="1"/><path d="M15.600 11.800 L11.300 8 V10.200 H6.500 V13.400 H11.300 V15.700 Z" fill="#fbe080" stroke="#c88a10" stroke-width=".9" stroke-linejoin="round"/></svg>
<span class="t" style="left:483px;top:739px;letter-spacing:-0.143px;">Declaration</span>
<svg class="ic" style="left:551px;top:738px" width="16" height="16" viewBox="0 0 16 16"><rect x="1.500" y="1.500" width="13" height="11" fill="#fff" stroke="#6a78a0"/><rect x="2" y="2" width="12" height="2" fill="#7a88a8"/><path d="M2 5.500h12M2 7.500h12M2 9.500h12M2 11.200h12" stroke="#a8b0c8" stroke-width=".9"/><path d="M6 4v8.500" stroke="#c0c8d8" stroke-width=".8"/></svg>
<span class="t" style="left:571px;top:739px;letter-spacing:-0.263px;">Properties</span>
<svg class="ic" style="left:633px;top:738px" width="16" height="16" viewBox="0 0 16 16"><rect x="1.500" y="1.500" width="12" height="9" rx="1" fill="#4a68b8" stroke="#2a3a88"/><rect x="3" y="3" width="9" height="6" fill="#e4eefc"/><path d="M4 5h5M4 7h3" stroke="#3a58a8" stroke-width=".9"/><rect x="5.500" y="11" width="4" height="1.500" fill="#4a68b8"/><rect x="3" y="12.500" width="9" height="1.800" fill="#2a3a88"/></svg>
<span class="t" style="left:652px;top:739px;letter-spacing:-0.822px;"><b>Console</b></span>
<div class="tabsep" style="left:389px;top:734px"></div>
<div class="tabsep" style="left:459px;top:734px"></div>
<div class="tabsep" style="left:547px;top:734px"></div>
<div class="tabsep" style="left:628px;top:734px"></div>
<svg class="tabcurve" style="left:693px;top:734px" width="130" height="24" viewBox="0 0 130 24"><path d="M6.5 24 L6.5 7 Q6.5 0.5 13 0.5 L86 0.500 C 100 0.500 104 23.500 121 23.500 L121 24 Z" fill="url(#gInact)"/><path d="M6.5 24 L6.5 7 Q6.5 0.5 13 0.5 L86 0.500 C 100 0.500 104 23.500 121 23.500" fill="none" stroke="#a0a0a0"/></svg>
<svg class="ic" style="left:702px;top:738px" width="16" height="16" viewBox="0 0 16 16"><path d="M6.500 0 V2.300 M10.500 0 V2.300 M14.500 0 V2.300 M15 2.300 H5 L1.800 5.500 V9.300 L5 12.400 H12" fill="none" stroke="#2060a8" stroke-width="1.100"/><circle cx="6.600" cy="7.400" r="3" fill="#f8d4d4" stroke="#c8a810" stroke-width="1.100"/></svg>
<span class="t" style="left:723px;top:739px;letter-spacing:-0.511px;">Progress</span>
<svg class="ic" style="left:773px;top:738px" width="16" height="16" viewBox="0 0 16 16"><path d="M3.500 3.500 H6 L8 5.500 L10 3.500 H12.500 V6 L10.500 8 L12.500 10 V12.500 H10 L8 10.500 L6 12.500 H3.500 V10 L5.500 8 L3.500 6 Z" fill="#fff" stroke="#606060" stroke-width="1"/></svg>
<svg class="ic" style="left:812px;top:738px" width="16" height="16" viewBox="0 0 16 16"><path d="M3.500 1.500v12M7.500 1.500v12M11.500 1.500v12" stroke="#506088" stroke-width="1.100"/><rect x="2" y="7.500" width="3" height="3.500" rx="1.300" fill="#88c848" stroke="#508820" stroke-width=".7"/><rect x="5.800" y="2.500" width="3.400" height="4" rx="1.300" fill="#f8c030" stroke="#b07808" stroke-width=".7"/><rect x="10" y="8" width="3" height="3.500" rx="1.300" fill="#78b0f0" stroke="#2a60b8" stroke-width=".7"/></svg>
<span class="t" style="left:831px;top:739px;letter-spacing:-0.791px;">Servers</span>
<div class="tabend" style="left:865px;top:734px"></div>
<svg class="ic" style="left:1199px;top:738px" width="16" height="16" viewBox="0 0 16 16"><path d="M0.500 1.800 L2.200 0.500 L5.500 3.800 L8.800 0.500 L10.500 1.800 L7.200 5 L10.500 8.200 L8.800 9.500 L5.500 6.300 L2.200 9.500 L0.500 8.200 L3.800 5 Z" fill="#e0e0e0" stroke="#b4b4b4" stroke-width=".8"/><path d="M3 5 L5 3.500 L9 7.500 L13 3.500 L15.200 5 L11.200 9.500 L15.200 14 L13 15.800 L9 11.800 L5 15.800 L3 14 L7 9.500 Z" fill="#8e8e8e" stroke="#6c6c6c" stroke-width=".8"/></svg>
<div class="vmenu" style="left:1222px;top:740px"></div>
<div class="mini" style="left:1241px;top:739px"></div><div class="maxi" style="left:1259px;top:739px"></div>
<span class="t" style="left:322px;top:765px;letter-spacing:0.015px;">No operations to display at this time.</span>
<svg style="position:absolute;left:5px;top:996px" width="3" height="24" viewBox="0 0 3 24"><rect x="0" y="0" width="2" height="2" fill="#fff"/><rect x="1" y="1" width="1.700" height="1.700" fill="#b0b0b0"/><rect x="0" y="4" width="2" height="2" fill="#fff"/><rect x="1" y="5" width="1.700" height="1.700" fill="#b0b0b0"/><rect x="0" y="8" width="2" height="2" fill="#fff"/><rect x="1" y="9" width="1.700" height="1.700" fill="#b0b0b0"/><rect x="0" y="12" width="2" height="2" fill="#fff"/><rect x="1" y="13" width="1.700" height="1.700" fill="#b0b0b0"/><rect x="0" y="16" width="2" height="2" fill="#fff"/><rect x="1" y="17" width="1.700" height="1.700" fill="#b0b0b0"/><rect x="0" y="20" width="2" height="2" fill="#fff"/><rect x="1" y="21" width="1.700" height="1.700" fill="#b0b0b0"/></svg>
<svg class="ic" style="left:17px;top:999px" width="16" height="16" viewBox="0 0 16 16"><defs><linearGradient id="fvg" x1="0" y1="0" x2="0" y2="1"><stop offset="0" stop-color="#ffffff"/><stop offset="1" stop-color="#d4f0fc"/></linearGradient></defs><rect x="1.500" y="3.500" width="5" height="11" fill="url(#fvg)" stroke="#a89860"/><rect x="1" y="3" width="6" height="2.600" fill="#3a78c8"/><path d="M11.4 0.8000000000000003 L12.48 3.3200000000000003 L15.0 4.4 L12.48 5.48 L11.4 8.0 L10.32 5.48 L7.800000000000001 4.4 L10.32 3.3200000000000003 Z" fill="#c8981c" stroke="#c8981c" stroke-width="1.100" stroke-linejoin="round"/><path d="M11.4 1.9000000000000004 V6.9 M8.9 4.4 H13.9" stroke="#fffbe0" stroke-width="1.100"/></svg>
<svg style="position:absolute;left:990px;top:996px" width="3" height="24" viewBox="0 0 3 24"><rect x="0" y="0" width="2" height="2" fill="#fff"/><rect x="1" y="1" width="1.700" height="1.700" fill="#b0b0b0"/><rect x="0" y="4" width="2" height="2" fill="#fff"/><rect x="1" y="5" width="1.700" height="1.700" fill="#b0b0b0"/><rect x="0" y="8" width="2" height="2" fill="#fff"/><rect x="1" y="9" width="1.700" height="1.700" fill="#b0b0b0"/><rect x="0" y="12" width="2" height="2" fill="#fff"/><rect x="1" y="13" width="1.700" height="1.700" fill="#b0b0b0"/><rect x="0" y="16" width="2" height="2" fill="#fff"/><rect x="1" y="17" width="1.700" height="1.700" fill="#b0b0b0"/><rect x="0" y="20" width="2" height="2" fill="#fff"/><rect x="1" y="21" width="1.700" height="1.700" fill="#b0b0b0"/></svg>
</body></html>
